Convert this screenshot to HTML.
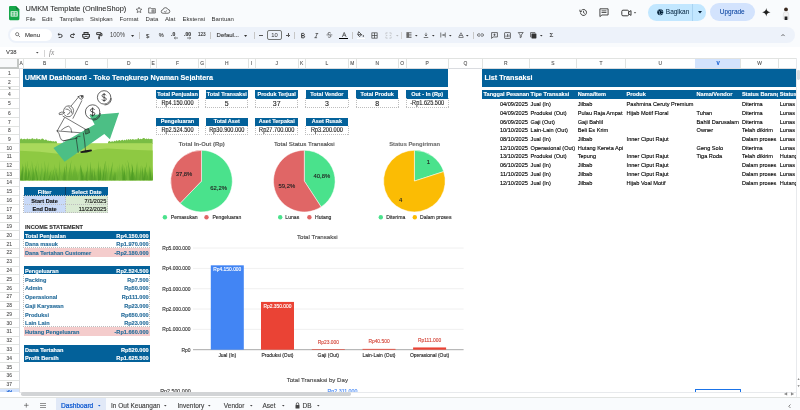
<!DOCTYPE html><html><head><meta charset="utf-8"><style>
html,body{margin:0;padding:0;}
body{width:800px;height:410px;overflow:hidden;position:relative;will-change:transform;font-family:"Liberation Sans", sans-serif;background:#fff;}
div{line-height:1;-webkit-text-stroke:0.12px currentColor;}
svg{overflow:visible;}
</style></head><body>
<div style="position:absolute;left:0.00px;top:0.00px;width:800.00px;height:47.00px;background:#f9fbfd;"></div>
<div style="position:absolute;left:0.00px;top:47.00px;width:800.00px;height:11.30px;background:#fff;"></div>
<svg style="position:absolute;left:9px;top:6.4px" width="10.4" height="14.2" viewBox="0 0 10.4 14.2"><path d="M0 1.1Q0 0 1.1 0H6.9L10.4 3.5V13.1Q10.4 14.2 9.3 14.2H1.1Q0 14.2 0 13.1Z" fill="#16a74a"/><path d="M6.9 0V2.5Q6.9 3.5 7.9 3.5H10.4Z" fill="#0e7f37"/><rect x="2.1" y="5.8" width="6.1" height="4.3" fill="none" stroke="#fff" stroke-width="0.9"/><line x1="2.1" y1="7.95" x2="8.2" y2="7.95" stroke="#fff" stroke-width="0.8"/><line x1="5.15" y1="5.8" x2="5.15" y2="10.1" stroke="#fff" stroke-width="0.8"/></svg>
<div style="position:absolute;left:25.6px;top:5.2px;font-size:7.45px;color:#1f1f1f;white-space:nowrap;-webkit-text-stroke:0.05px">UMKM Template (OnlineShop)</div>
<svg style="position:absolute;left:134.5px;top:6px" width="8" height="8" viewBox="0 0 24 24"><path d="M12 3.5l2.6 5.6 6.1.6-4.6 4.1 1.3 6-5.4-3.1-5.4 3.1 1.3-6-4.6-4.1 6.1-.6z" fill="none" stroke="#444" stroke-width="2"/></svg>
<svg style="position:absolute;left:147.5px;top:6.5px" width="8" height="7" viewBox="0 0 24 21"><path d="M2 3h7l2 2h11v13H2z" fill="none" stroke="#444" stroke-width="2.2"/><rect x="12" y="9" width="6" height="6" fill="none" stroke="#444" stroke-width="2"/></svg>
<svg style="position:absolute;left:160.5px;top:6.5px" width="9" height="7" viewBox="0 0 26 20"><path d="M6 18a5 5 0 0 1-.5-10A7.5 7.5 0 0 1 20 7a5.5 5.5 0 0 1 0 11z" fill="none" stroke="#444" stroke-width="2.2"/><path d="M9 12l3 3 5-5" fill="none" stroke="#444" stroke-width="2"/></svg>
<div style="position:absolute;left:26px;top:15.6px;font-size:6px;color:#333;white-space:nowrap;-webkit-text-stroke:0">File</div>
<div style="position:absolute;left:42px;top:15.6px;font-size:6px;color:#333;white-space:nowrap;-webkit-text-stroke:0">Edit</div>
<div style="position:absolute;left:59.5px;top:15.6px;font-size:6px;color:#333;white-space:nowrap;-webkit-text-stroke:0">Tampilan</div>
<div style="position:absolute;left:90px;top:15.6px;font-size:6px;color:#333;white-space:nowrap;-webkit-text-stroke:0">Sisipkan</div>
<div style="position:absolute;left:119.5px;top:15.6px;font-size:6px;color:#333;white-space:nowrap;-webkit-text-stroke:0">Format</div>
<div style="position:absolute;left:145.6px;top:15.6px;font-size:6px;color:#333;white-space:nowrap;-webkit-text-stroke:0">Data</div>
<div style="position:absolute;left:165px;top:15.6px;font-size:6px;color:#333;white-space:nowrap;-webkit-text-stroke:0">Alat</div>
<div style="position:absolute;left:182.4px;top:15.6px;font-size:6px;color:#333;white-space:nowrap;-webkit-text-stroke:0">Ekstensi</div>
<div style="position:absolute;left:211.6px;top:15.6px;font-size:6px;color:#333;white-space:nowrap;-webkit-text-stroke:0">Bantuan</div>
<svg style="position:absolute;left:579px;top:7.5px" width="9" height="9" viewBox="0 0 24 24"><path d="M4 12a8 8 0 1 0 2.3-5.7" fill="none" stroke="#333" stroke-width="2.4"/><path d="M2.5 4.5v5h5" fill="none" stroke="#333" stroke-width="2.4"/><path d="M12 7.5v5l3.5 2" fill="none" stroke="#333" stroke-width="2.2"/></svg>
<svg style="position:absolute;left:599px;top:8px" width="10" height="9" viewBox="0 0 24 22"><path d="M2 2h20v15H7l-5 4z" fill="none" stroke="#333" stroke-width="2.2"/><path d="M6 7h12M6 11h12" stroke="#333" stroke-width="2"/></svg>
<svg style="position:absolute;left:621px;top:8.5px" width="16" height="8" viewBox="0 0 40 20"><rect x="2" y="3" width="17" height="14" rx="3" fill="none" stroke="#333" stroke-width="2.4"/><path d="M19 8l6-4v12l-6-4" fill="none" stroke="#333" stroke-width="2.4"/><path d="M32 8l3 3 3-3z" fill="#333"/></svg>
<div style="position:absolute;left:648px;top:4px;width:58px;height:16.5px;border-radius:8.25px;background:#c2e7ff"></div>
<div style="position:absolute;left:692.40px;top:4.00px;width:0.60px;height:16.50px;background:#a9d3f1;"></div>
<svg style="position:absolute;left:656.5px;top:9px" width="6.5" height="6.5" viewBox="0 0 24 24"><circle cx="12" cy="12" r="11" fill="#001d35"/><path d="M5 6q3 1 4 4t-1 5q2 2 1 6M14 2q-1 4 2 5t5 4M13 22q0-4 3-5t5 0" fill="none" stroke="#c2e7ff" stroke-width="2.2"/></svg>
<div style="position:absolute;left:665.8px;top:8.8px;font-size:6.5px;color:#0a2a45;white-space:nowrap;-webkit-text-stroke:0.05px">Bagikan</div>
<svg style="position:absolute;left:697.5px;top:11px" width="4" height="2.5" viewBox="0 0 8 5"><path d="M0 0h8L4 5z" fill="#001d35"/></svg>
<div style="position:absolute;left:710px;top:3.3px;width:44.6px;height:18.2px;border-radius:9.1px;background:#d3e3fd"></div>
<div style="position:absolute;left:719.8px;top:8.8px;font-size:6.5px;color:#0842a0;white-space:nowrap;-webkit-text-stroke:0.05px">Upgrade</div>
<svg style="position:absolute;left:761.5px;top:8px" width="8.5" height="8.5" viewBox="0 0 24 24"><path d="M12 0Q13 11 24 12Q13 13 12 24Q11 13 0 12Q11 11 12 0z" fill="#1f1f1f"/></svg>
<svg style="position:absolute;left:782px;top:6.5px" width="8" height="13" viewBox="0 0 8 13"><circle cx="4" cy="2.4" r="1.9" fill="#3a2a20"/><path d="M1.3 12V7.2q0-2.6 2.7-2.6t2.7 2.6V12z" fill="#f2f2f2" stroke="#bbb" stroke-width="0.3"/><path d="M2.6 9.5h2.8v3.5H2.6z" fill="#222"/></svg>
<div style="position:absolute;left:8px;top:26.8px;width:786.5px;height:16.2px;border-radius:8.1px;background:#edf2fa"></div>
<div style="position:absolute;left:10px;top:29px;width:42px;height:12px;border-radius:6px;background:#fff"></div>
<svg style="position:absolute;left:15.3px;top:32px" width="5.5" height="5.5" viewBox="0 0 24 24"><circle cx="9.5" cy="9.5" r="7" fill="none" stroke="#444" stroke-width="2.8"/><path d="M15 15l7 7" stroke="#444" stroke-width="3"/></svg>
<div style="position:absolute;left:25px;top:31.8px;font-size:6px;color:#444;white-space:nowrap">Menu</div>
<svg style="position:absolute;left:56.6px;top:33.2px" width="5.6" height="4.9" viewBox="0 0 24 21"><path d="M6 6h9.5a6.5 6.5 0 0 1 0 13H7" fill="none" stroke="#333" stroke-width="4"/><path d="M9.5 1.5L4 6l5.5 4.5" fill="none" stroke="#333" stroke-width="4"/></svg>
<svg style="position:absolute;left:69.6px;top:33.2px" width="5.6" height="4.9" viewBox="0 0 24 21"><path d="M18 6H8.5a6.5 6.5 0 0 0 0 13H17" fill="none" stroke="#333" stroke-width="4"/><path d="M14.5 1.5L20 6l-5.5 4.5" fill="none" stroke="#333" stroke-width="4"/></svg>
<svg style="position:absolute;left:82.1px;top:32px" width="8.1" height="6.8" viewBox="0 0 24 20"><path d="M6 1.5h12v5H6z" fill="none" stroke="#333" stroke-width="3"/><path d="M2 7h20v8h-4v4H6v-4H2z" fill="none" stroke="#333" stroke-width="3"/><path d="M8 13h8" stroke="#333" stroke-width="2.6"/></svg>
<svg style="position:absolute;left:95.6px;top:32px" width="6.5" height="7.4" viewBox="0 0 20 23"><path d="M2 2h13v6H2z" fill="none" stroke="#333" stroke-width="3"/><path d="M15 5h3.5v6.5H9.5v3" fill="none" stroke="#333" stroke-width="3"/><path d="M7 14h5v6.5a2.5 2.5 0 0 1-5 0z" fill="#333"/></svg>
<div style="position:absolute;left:110px;top:33.2px;font-size:5.9px;color:#444;white-space:nowrap;transform:scaleY(1.12);-webkit-text-stroke:0">100%</div>
<svg style="position:absolute;left:130.5px;top:34.6px" width="3.2" height="1.9" viewBox="0 0 8 5"><path d="M0 0h8L4 5z" fill="#333"/></svg>
<div style="position:absolute;left:139.30px;top:31.50px;width:0.60px;height:7.00px;background:#c7c7c7;"></div>
<div style="position:absolute;left:146px;top:32.9px;font-size:6px;color:#444;white-space:nowrap;-webkit-text-stroke:0.1px">$</div>
<div style="position:absolute;left:158.8px;top:33.2px;font-size:5.6px;color:#444;white-space:nowrap">%</div>
<div style="position:absolute;left:171px;top:32.4px;font-size:5px;color:#333;white-space:nowrap;font-weight:bold">.0</div>
<svg style="position:absolute;left:173.8px;top:37.3px" width="4" height="2" viewBox="0 0 8 4"><path d="M8 2H1M3 0L0.5 2 3 4" fill="none" stroke="#333" stroke-width="1.2"/></svg>
<div style="position:absolute;left:184px;top:32.4px;font-size:5px;color:#333;white-space:nowrap;font-weight:bold">.00</div>
<svg style="position:absolute;left:187.3px;top:37.3px" width="4" height="2" viewBox="0 0 8 4"><path d="M0 2H7M5 0L7.5 2 5 4" fill="none" stroke="#333" stroke-width="1.2"/></svg>
<div style="position:absolute;left:198px;top:33.4px;font-size:4.6px;color:#333;white-space:nowrap">123</div>
<div style="position:absolute;left:209.70px;top:31.50px;width:0.60px;height:7.00px;background:#c7c7c7;"></div>
<div style="position:absolute;left:216.6px;top:32.4px;font-size:6px;color:#333;white-space:nowrap">Defaul...</div>
<svg style="position:absolute;left:244.3px;top:34.6px" width="3.2" height="1.9" viewBox="0 0 8 5"><path d="M0 0h8L4 5z" fill="#333"/></svg>
<div style="position:absolute;left:254.10px;top:31.50px;width:0.60px;height:7.00px;background:#c7c7c7;"></div>
<div style="position:absolute;left:259.30px;top:35.00px;width:3.30px;height:0.50px;background:#555;"></div>
<div style="position:absolute;left:267.4px;top:30.2px;width:14.2px;height:10px;box-sizing:border-box;border:0.8px solid #747775;border-radius:2px;font-size:5.8px;color:#333;display:flex;align-items:center;justify-content:center;padding-top:1px;box-sizing:border-box;-webkit-text-stroke:0">10</div>
<div style="position:absolute;left:286.00px;top:35.00px;width:3.60px;height:0.50px;background:#555;"></div>
<div style="position:absolute;left:287.55px;top:33.40px;width:0.50px;height:3.80px;background:#555;"></div>
<div style="position:absolute;left:294.20px;top:31.50px;width:0.60px;height:7.00px;background:#c7c7c7;"></div>
<svg style="position:absolute;left:300.6px;top:32.6px" width="4.4" height="5.2" viewBox="0 0 11 13"><path d="M1.5 1h5a3 3 0 0 1 0 5.5h-5zM1.5 6.5h5.8a3 3 0 0 1 0 5.5H1.5z" fill="none" stroke="#333" stroke-width="2.2"/></svg>
<svg style="position:absolute;left:313.8px;top:32.6px" width="4.6" height="5.2" viewBox="0 0 12 13"><path d="M4 1h7M1 12h7M8.5 1L4 12" fill="none" stroke="#333" stroke-width="1.8"/></svg>
<svg style="position:absolute;left:326.2px;top:32.2px" width="6.8" height="5.8" viewBox="0 0 17 15"><path d="M12 3Q10.5 1.2 8.2 1.2Q5 1.2 5 4Q5 5.6 7.5 6.4M9.5 8.5Q12 9.5 12 11.2Q12 13.8 8.6 13.8Q6 13.8 4.6 11.8" fill="none" stroke="#333" stroke-width="1.7"/><path d="M1 7.5h15" stroke="#333" stroke-width="1.5"/></svg>
<svg style="position:absolute;left:340.8px;top:32px" width="6.4" height="5.2" viewBox="0 0 14 12"><path d="M2.5 11.5L7 1l4.5 10.5M4.3 7.5h5.4" fill="none" stroke="#333" stroke-width="1.6"/></svg>
<div style="position:absolute;left:339.00px;top:38.00px;width:9.00px;height:1.40px;background:#000;"></div>
<div style="position:absolute;left:351.70px;top:31.50px;width:0.60px;height:7.00px;background:#c7c7c7;"></div>
<svg style="position:absolute;left:357px;top:31px" width="8" height="8" viewBox="0 0 24 24"><path d="M5 2l9 9-6 6-6-6z" fill="none" stroke="#333" stroke-width="2.4"/><path d="M3 11h11" stroke="#333" stroke-width="2.4"/><circle cx="19" cy="15" r="2.2" fill="#333"/><rect x="0" y="21" width="24" height="3" fill="#fff"/></svg>
<svg style="position:absolute;left:371px;top:31.8px" width="7" height="7" viewBox="0 0 24 24"><rect x="3" y="3" width="18" height="18" fill="none" stroke="#333" stroke-width="2.3"/><path d="M12 3v18M3 12h18" stroke="#333" stroke-width="2.3"/></svg>
<svg style="position:absolute;left:385px;top:31.8px" width="7" height="7" viewBox="0 0 24 24"><path d="M3 8V3h6M15 3h6v5M21 16v5h-6M9 21H3v-5M3 12h5M16 12h5" fill="none" stroke="#b7b9bb" stroke-width="2.3"/></svg>
<svg style="position:absolute;left:396px;top:34.5px" width="2.6" height="1.6" viewBox="0 0 8 5"><path d="M0 0h8L4 5z" fill="#b7b9bb"/></svg>
<div style="position:absolute;left:401.10px;top:31.50px;width:0.50px;height:7.00px;background:#d0d0d0;"></div>
<svg style="position:absolute;left:406px;top:32.2px" width="6" height="6" viewBox="0 0 24 24"><path d="M2 2.5h20M2 9h20M2 15.5h20M2 22h20" stroke="#5a5a5a" stroke-width="3"/><rect x="2" y="2" width="10" height="20" fill="#6a6a6a"/></svg>
<svg style="position:absolute;left:415.2px;top:34.5px" width="2.6" height="1.6" viewBox="0 0 8 5"><path d="M0 0h8L4 5z" fill="#333"/></svg>
<svg style="position:absolute;left:423px;top:32px" width="6" height="6.5" viewBox="0 0 24 24"><path d="M12 2v13M7 10l5 5 5-5M3 21h18" fill="none" stroke="#333" stroke-width="2.5"/></svg>
<svg style="position:absolute;left:432.2px;top:34.5px" width="2.6" height="1.6" viewBox="0 0 8 5"><path d="M0 0h8L4 5z" fill="#333"/></svg>
<svg style="position:absolute;left:439.6px;top:32px" width="6" height="6" viewBox="0 0 24 24"><path d="M3 2v20M21 2v20M7 12h11M14 8l4 4-4 4" fill="none" stroke="#333" stroke-width="2.5"/></svg>
<svg style="position:absolute;left:448.7px;top:34.5px" width="2.6" height="1.6" viewBox="0 0 8 5"><path d="M0 0h8L4 5z" fill="#333"/></svg>
<svg style="position:absolute;left:457.6px;top:32px" width="6" height="6" viewBox="0 0 24 24"><path d="M3 20L12 3l9 17M6 14h12M2 22h20" fill="none" stroke="#333" stroke-width="2.3"/></svg>
<svg style="position:absolute;left:466.3px;top:34.5px" width="2.6" height="1.6" viewBox="0 0 8 5"><path d="M0 0h8L4 5z" fill="#333"/></svg>
<div style="position:absolute;left:472.70px;top:31.50px;width:0.60px;height:7.00px;background:#c7c7c7;"></div>
<svg style="position:absolute;left:477px;top:33px" width="7" height="4" viewBox="0 0 28 14"><path d="M11 2H7a5 5 0 0 0 0 10h4M17 2h4a5 5 0 0 1 0 10h-4M9 7h10" fill="none" stroke="#333" stroke-width="2.6"/></svg>
<svg style="position:absolute;left:491px;top:31.8px" width="7" height="7" viewBox="0 0 24 24"><path d="M2 2h20v15H7l-5 5z" fill="none" stroke="#333" stroke-width="2.4"/><path d="M12 5.5v8M8 9.5h8" stroke="#333" stroke-width="2.2"/></svg>
<svg style="position:absolute;left:504px;top:31.8px" width="7" height="7" viewBox="0 0 24 24"><rect x="2" y="2" width="20" height="20" rx="2" fill="none" stroke="#333" stroke-width="2.4"/><path d="M7 17v-5M12 17V7M17 17v-8" stroke="#333" stroke-width="2.4"/></svg>
<svg style="position:absolute;left:518px;top:32px" width="5.5" height="6" viewBox="0 0 20 22"><path d="M1 2h18l-7 9v8l-4 2V11z" fill="none" stroke="#333" stroke-width="2.4"/></svg>
<svg style="position:absolute;left:530px;top:31.8px" width="7" height="7" viewBox="0 0 24 24"><rect x="5" y="5" width="17" height="17" rx="2" fill="#333"/><path d="M2 18V2h16" fill="none" stroke="#333" stroke-width="2.4"/></svg>
<svg style="position:absolute;left:540.2px;top:34.5px" width="2.6" height="1.6" viewBox="0 0 8 5"><path d="M0 0h8L4 5z" fill="#333"/></svg>
<div style="position:absolute;left:549.6px;top:32.4px;font-size:6.2px;color:#333">&#931;</div>
<svg style="position:absolute;left:780.5px;top:34px" width="4" height="2.5" viewBox="0 0 10 6"><path d="M1 5l4-4 4 4" fill="none" stroke="#333" stroke-width="1.8"/></svg>
<div style="position:absolute;left:6px;top:50.2px;font-size:5.9px;color:#333;white-space:nowrap;-webkit-text-stroke:0.05px">V38</div>
<svg style="position:absolute;left:36.2px;top:51.9px" width="2.6" height="1.6" viewBox="0 0 8 5"><path d="M0 0h8L4 5z" fill="#444"/></svg>
<div style="position:absolute;left:44.20px;top:49.50px;width:0.50px;height:7.00px;background:#d5d5d5;"></div>
<div style="position:absolute;left:49px;top:49.2px;font-size:7.4px;color:#888;font-style:italic;font-family:'Liberation Serif';-webkit-text-stroke:0">fx</div>
<div style="position:absolute;left:0.00px;top:58.30px;width:800.00px;height:10.30px;background:#fff;"></div>
<div style="position:absolute;left:0.00px;top:58.00px;width:800.00px;height:0.60px;background:#e1e3e1;"></div>
<div style="position:absolute;left:19.00px;top:68.10px;width:777.00px;height:0.60px;background:#dadce0;"></div>
<div style="position:absolute;left:0.00px;top:58.60px;width:17.40px;height:9.00px;background:#f8f9fa;"></div>
<div style="position:absolute;left:17.30px;top:58.60px;width:1.60px;height:10.10px;background:#c4c7c5;"></div>
<div style="position:absolute;left:0.00px;top:67.30px;width:18.90px;height:1.40px;background:#c4c7c5;"></div>
<div style="position:absolute;left:23.20px;top:58.60px;width:0.60px;height:9.50px;background:#e1e3e1;"></div>
<div style="position:absolute;left:19.00px;top:59.6px;width:4.50px;height:9.5px;display:flex;align-items:center;justify-content:center;font-size:4.9px;color:#575757;font-weight:normal;overflow:hidden">A</div>
<div style="position:absolute;left:65.30px;top:58.60px;width:0.60px;height:9.50px;background:#e1e3e1;"></div>
<div style="position:absolute;left:23.50px;top:59.6px;width:42.10px;height:9.5px;display:flex;align-items:center;justify-content:center;font-size:4.9px;color:#575757;font-weight:normal;overflow:hidden">B</div>
<div style="position:absolute;left:107.30px;top:58.60px;width:0.60px;height:9.50px;background:#e1e3e1;"></div>
<div style="position:absolute;left:65.60px;top:59.6px;width:42.00px;height:9.5px;display:flex;align-items:center;justify-content:center;font-size:4.9px;color:#575757;font-weight:normal;overflow:hidden">C</div>
<div style="position:absolute;left:149.70px;top:58.60px;width:0.60px;height:9.50px;background:#e1e3e1;"></div>
<div style="position:absolute;left:107.60px;top:59.6px;width:42.40px;height:9.5px;display:flex;align-items:center;justify-content:center;font-size:4.9px;color:#575757;font-weight:normal;overflow:hidden">D</div>
<div style="position:absolute;left:156.10px;top:58.60px;width:0.60px;height:9.50px;background:#e1e3e1;"></div>
<div style="position:absolute;left:150.00px;top:59.6px;width:6.40px;height:9.5px;display:flex;align-items:center;justify-content:center;font-size:4.9px;color:#575757;font-weight:normal;overflow:hidden">E</div>
<div style="position:absolute;left:198.30px;top:58.60px;width:0.60px;height:9.50px;background:#e1e3e1;"></div>
<div style="position:absolute;left:156.40px;top:59.6px;width:42.20px;height:9.5px;display:flex;align-items:center;justify-content:center;font-size:4.9px;color:#575757;font-weight:normal;overflow:hidden">F</div>
<div style="position:absolute;left:205.30px;top:58.60px;width:0.60px;height:9.50px;background:#e1e3e1;"></div>
<div style="position:absolute;left:198.60px;top:59.6px;width:7.00px;height:9.5px;display:flex;align-items:center;justify-content:center;font-size:4.9px;color:#575757;font-weight:normal;overflow:hidden">G</div>
<div style="position:absolute;left:247.70px;top:58.60px;width:0.60px;height:9.50px;background:#e1e3e1;"></div>
<div style="position:absolute;left:205.60px;top:59.6px;width:42.40px;height:9.5px;display:flex;align-items:center;justify-content:center;font-size:4.9px;color:#575757;font-weight:normal;overflow:hidden">H</div>
<div style="position:absolute;left:255.10px;top:58.60px;width:0.60px;height:9.50px;background:#e1e3e1;"></div>
<div style="position:absolute;left:248.00px;top:59.6px;width:7.40px;height:9.5px;display:flex;align-items:center;justify-content:center;font-size:4.9px;color:#575757;font-weight:normal;overflow:hidden">I</div>
<div style="position:absolute;left:297.70px;top:58.60px;width:0.60px;height:9.50px;background:#e1e3e1;"></div>
<div style="position:absolute;left:255.40px;top:59.6px;width:42.60px;height:9.5px;display:flex;align-items:center;justify-content:center;font-size:4.9px;color:#575757;font-weight:normal;overflow:hidden">J</div>
<div style="position:absolute;left:305.20px;top:58.60px;width:0.60px;height:9.50px;background:#e1e3e1;"></div>
<div style="position:absolute;left:298.00px;top:59.6px;width:7.50px;height:9.5px;display:flex;align-items:center;justify-content:center;font-size:4.9px;color:#575757;font-weight:normal;overflow:hidden">K</div>
<div style="position:absolute;left:348.10px;top:58.60px;width:0.60px;height:9.50px;background:#e1e3e1;"></div>
<div style="position:absolute;left:305.50px;top:59.6px;width:42.90px;height:9.5px;display:flex;align-items:center;justify-content:center;font-size:4.9px;color:#575757;font-weight:normal;overflow:hidden">L</div>
<div style="position:absolute;left:355.70px;top:58.60px;width:0.60px;height:9.50px;background:#e1e3e1;"></div>
<div style="position:absolute;left:348.40px;top:59.6px;width:7.60px;height:9.5px;display:flex;align-items:center;justify-content:center;font-size:4.9px;color:#575757;font-weight:normal;overflow:hidden">M</div>
<div style="position:absolute;left:398.10px;top:58.60px;width:0.60px;height:9.50px;background:#e1e3e1;"></div>
<div style="position:absolute;left:356.00px;top:59.6px;width:42.40px;height:9.5px;display:flex;align-items:center;justify-content:center;font-size:4.9px;color:#575757;font-weight:normal;overflow:hidden">N</div>
<div style="position:absolute;left:405.70px;top:58.60px;width:0.60px;height:9.50px;background:#e1e3e1;"></div>
<div style="position:absolute;left:398.40px;top:59.6px;width:7.60px;height:9.5px;display:flex;align-items:center;justify-content:center;font-size:4.9px;color:#575757;font-weight:normal;overflow:hidden">O</div>
<div style="position:absolute;left:448.10px;top:58.60px;width:0.60px;height:9.50px;background:#e1e3e1;"></div>
<div style="position:absolute;left:406.00px;top:59.6px;width:42.40px;height:9.5px;display:flex;align-items:center;justify-content:center;font-size:4.9px;color:#575757;font-weight:normal;overflow:hidden">P</div>
<div style="position:absolute;left:482.10px;top:58.60px;width:0.60px;height:9.50px;background:#e1e3e1;"></div>
<div style="position:absolute;left:448.40px;top:59.6px;width:34.00px;height:9.5px;display:flex;align-items:center;justify-content:center;font-size:4.9px;color:#575757;font-weight:normal;overflow:hidden">Q</div>
<div style="position:absolute;left:529.10px;top:58.60px;width:0.60px;height:9.50px;background:#e1e3e1;"></div>
<div style="position:absolute;left:482.40px;top:59.6px;width:47.00px;height:9.5px;display:flex;align-items:center;justify-content:center;font-size:4.9px;color:#575757;font-weight:normal;overflow:hidden">R</div>
<div style="position:absolute;left:576.20px;top:58.60px;width:0.60px;height:9.50px;background:#e1e3e1;"></div>
<div style="position:absolute;left:529.40px;top:59.6px;width:47.10px;height:9.5px;display:flex;align-items:center;justify-content:center;font-size:4.9px;color:#575757;font-weight:normal;overflow:hidden">S</div>
<div style="position:absolute;left:625.10px;top:58.60px;width:0.60px;height:9.50px;background:#e1e3e1;"></div>
<div style="position:absolute;left:576.50px;top:59.6px;width:48.90px;height:9.5px;display:flex;align-items:center;justify-content:center;font-size:4.9px;color:#575757;font-weight:normal;overflow:hidden">T</div>
<div style="position:absolute;left:695.10px;top:58.60px;width:0.60px;height:9.50px;background:#e1e3e1;"></div>
<div style="position:absolute;left:625.40px;top:59.6px;width:70.00px;height:9.5px;display:flex;align-items:center;justify-content:center;font-size:4.9px;color:#575757;font-weight:normal;overflow:hidden">U</div>
<div style="position:absolute;left:695.40px;top:58.60px;width:45.30px;height:9.50px;background:#d3e3fd;"></div>
<div style="position:absolute;left:740.40px;top:58.60px;width:0.60px;height:9.50px;background:#e1e3e1;"></div>
<div style="position:absolute;left:695.40px;top:59.6px;width:45.30px;height:9.5px;display:flex;align-items:center;justify-content:center;font-size:4.9px;color:#0b57d0;font-weight:bold;overflow:hidden">V</div>
<div style="position:absolute;left:778.20px;top:58.60px;width:0.60px;height:9.50px;background:#e1e3e1;"></div>
<div style="position:absolute;left:740.70px;top:59.6px;width:37.80px;height:9.5px;display:flex;align-items:center;justify-content:center;font-size:4.9px;color:#575757;font-weight:normal;overflow:hidden">W</div>
<div style="position:absolute;left:795.70px;top:58.60px;width:0.60px;height:9.50px;background:#e1e3e1;"></div>
<div style="position:absolute;left:0.00px;top:68.70px;width:18.90px;height:323.30px;background:#fff;"></div>
<div style="position:absolute;left:18.60px;top:68.70px;width:0.50px;height:323.30px;background:#dadce0;"></div>
<div style="position:absolute;left:0.00px;top:77.20px;width:18.60px;height:0.60px;background:#e1e3e1;"></div>
<div style="position:absolute;left:0;top:70.10px;width:18.6px;height:8.80px;display:flex;align-items:center;justify-content:center;font-size:4.9px;color:#575757;overflow:hidden">1</div>
<div style="position:absolute;left:0.00px;top:86.00px;width:18.60px;height:0.60px;background:#e1e3e1;"></div>
<div style="position:absolute;left:0;top:78.90px;width:18.6px;height:8.80px;display:flex;align-items:center;justify-content:center;font-size:4.9px;color:#575757;overflow:hidden">2</div>
<div style="position:absolute;left:0.00px;top:89.20px;width:18.60px;height:0.60px;background:#e1e3e1;"></div>
<div style="position:absolute;left:0;top:86.30px;width:18.6px;height:2.60px;overflow:hidden;font-size:4.9px;color:#575757;text-align:center;line-height:4.9px"><span style="position:relative;top:1.6px">3</span></div>
<div style="position:absolute;left:0.00px;top:98.20px;width:18.60px;height:0.60px;background:#e1e3e1;"></div>
<div style="position:absolute;left:0;top:90.90px;width:18.6px;height:9.00px;display:flex;align-items:center;justify-content:center;font-size:4.9px;color:#575757;overflow:hidden">4</div>
<div style="position:absolute;left:0.00px;top:107.70px;width:18.60px;height:0.60px;background:#e1e3e1;"></div>
<div style="position:absolute;left:0;top:99.90px;width:18.6px;height:9.50px;display:flex;align-items:center;justify-content:center;font-size:4.9px;color:#575757;overflow:hidden">5</div>
<div style="position:absolute;left:0.00px;top:117.20px;width:18.60px;height:0.60px;background:#e1e3e1;"></div>
<div style="position:absolute;left:0;top:109.40px;width:18.6px;height:9.50px;display:flex;align-items:center;justify-content:center;font-size:4.9px;color:#575757;overflow:hidden">6</div>
<div style="position:absolute;left:0.00px;top:125.70px;width:18.60px;height:0.60px;background:#e1e3e1;"></div>
<div style="position:absolute;left:0;top:118.90px;width:18.6px;height:8.50px;display:flex;align-items:center;justify-content:center;font-size:4.9px;color:#575757;overflow:hidden">7</div>
<div style="position:absolute;left:0.00px;top:134.20px;width:18.60px;height:0.60px;background:#e1e3e1;"></div>
<div style="position:absolute;left:0;top:127.40px;width:18.6px;height:8.50px;display:flex;align-items:center;justify-content:center;font-size:4.9px;color:#575757;overflow:hidden">8</div>
<div style="position:absolute;left:0.00px;top:143.20px;width:18.60px;height:0.60px;background:#e1e3e1;"></div>
<div style="position:absolute;left:0;top:135.90px;width:18.6px;height:9.00px;display:flex;align-items:center;justify-content:center;font-size:4.9px;color:#575757;overflow:hidden">9</div>
<div style="position:absolute;left:0.00px;top:151.70px;width:18.60px;height:0.60px;background:#e1e3e1;"></div>
<div style="position:absolute;left:0;top:144.90px;width:18.6px;height:8.50px;display:flex;align-items:center;justify-content:center;font-size:4.9px;color:#575757;overflow:hidden">10</div>
<div style="position:absolute;left:0.00px;top:160.50px;width:18.60px;height:0.60px;background:#e1e3e1;"></div>
<div style="position:absolute;left:0;top:153.40px;width:18.6px;height:8.80px;display:flex;align-items:center;justify-content:center;font-size:4.9px;color:#575757;overflow:hidden">11</div>
<div style="position:absolute;left:0.00px;top:169.20px;width:18.60px;height:0.60px;background:#e1e3e1;"></div>
<div style="position:absolute;left:0;top:162.20px;width:18.6px;height:8.70px;display:flex;align-items:center;justify-content:center;font-size:4.9px;color:#575757;overflow:hidden">12</div>
<div style="position:absolute;left:0.00px;top:177.70px;width:18.60px;height:0.60px;background:#e1e3e1;"></div>
<div style="position:absolute;left:0;top:170.90px;width:18.6px;height:8.50px;display:flex;align-items:center;justify-content:center;font-size:4.9px;color:#575757;overflow:hidden">13</div>
<div style="position:absolute;left:0.00px;top:186.20px;width:18.60px;height:0.60px;background:#e1e3e1;"></div>
<div style="position:absolute;left:0;top:179.40px;width:18.6px;height:8.50px;display:flex;align-items:center;justify-content:center;font-size:4.9px;color:#575757;overflow:hidden">14</div>
<div style="position:absolute;left:0.00px;top:195.20px;width:18.60px;height:0.60px;background:#e1e3e1;"></div>
<div style="position:absolute;left:0;top:187.90px;width:18.6px;height:9.00px;display:flex;align-items:center;justify-content:center;font-size:4.9px;color:#575757;overflow:hidden">15</div>
<div style="position:absolute;left:0.00px;top:204.20px;width:18.60px;height:0.60px;background:#e1e3e1;"></div>
<div style="position:absolute;left:0;top:196.90px;width:18.6px;height:9.00px;display:flex;align-items:center;justify-content:center;font-size:4.9px;color:#575757;overflow:hidden">16</div>
<div style="position:absolute;left:0.00px;top:212.70px;width:18.60px;height:0.60px;background:#e1e3e1;"></div>
<div style="position:absolute;left:0;top:205.90px;width:18.6px;height:8.50px;display:flex;align-items:center;justify-content:center;font-size:4.9px;color:#575757;overflow:hidden">17</div>
<div style="position:absolute;left:0.00px;top:221.70px;width:18.60px;height:0.60px;background:#e1e3e1;"></div>
<div style="position:absolute;left:0;top:214.40px;width:18.6px;height:9.00px;display:flex;align-items:center;justify-content:center;font-size:4.9px;color:#575757;overflow:hidden">18</div>
<div style="position:absolute;left:0.00px;top:230.20px;width:18.60px;height:0.60px;background:#e1e3e1;"></div>
<div style="position:absolute;left:0;top:223.40px;width:18.6px;height:8.50px;display:flex;align-items:center;justify-content:center;font-size:4.9px;color:#575757;overflow:hidden">19</div>
<div style="position:absolute;left:0.00px;top:239.00px;width:18.60px;height:0.60px;background:#e1e3e1;"></div>
<div style="position:absolute;left:0;top:231.90px;width:18.6px;height:8.80px;display:flex;align-items:center;justify-content:center;font-size:4.9px;color:#575757;overflow:hidden">20</div>
<div style="position:absolute;left:0.00px;top:247.70px;width:18.60px;height:0.60px;background:#e1e3e1;"></div>
<div style="position:absolute;left:0;top:240.70px;width:18.6px;height:8.70px;display:flex;align-items:center;justify-content:center;font-size:4.9px;color:#575757;overflow:hidden">21</div>
<div style="position:absolute;left:0.00px;top:256.70px;width:18.60px;height:0.60px;background:#e1e3e1;"></div>
<div style="position:absolute;left:0;top:249.40px;width:18.6px;height:9.00px;display:flex;align-items:center;justify-content:center;font-size:4.9px;color:#575757;overflow:hidden">22</div>
<div style="position:absolute;left:0.00px;top:265.50px;width:18.60px;height:0.60px;background:#e1e3e1;"></div>
<div style="position:absolute;left:0;top:258.40px;width:18.6px;height:8.80px;display:flex;align-items:center;justify-content:center;font-size:4.9px;color:#575757;overflow:hidden">23</div>
<div style="position:absolute;left:0.00px;top:274.20px;width:18.60px;height:0.60px;background:#e1e3e1;"></div>
<div style="position:absolute;left:0;top:267.20px;width:18.6px;height:8.70px;display:flex;align-items:center;justify-content:center;font-size:4.9px;color:#575757;overflow:hidden">24</div>
<div style="position:absolute;left:0.00px;top:283.00px;width:18.60px;height:0.60px;background:#e1e3e1;"></div>
<div style="position:absolute;left:0;top:275.90px;width:18.6px;height:8.80px;display:flex;align-items:center;justify-content:center;font-size:4.9px;color:#575757;overflow:hidden">25</div>
<div style="position:absolute;left:0.00px;top:291.70px;width:18.60px;height:0.60px;background:#e1e3e1;"></div>
<div style="position:absolute;left:0;top:284.70px;width:18.6px;height:8.70px;display:flex;align-items:center;justify-content:center;font-size:4.9px;color:#575757;overflow:hidden">26</div>
<div style="position:absolute;left:0.00px;top:300.50px;width:18.60px;height:0.60px;background:#e1e3e1;"></div>
<div style="position:absolute;left:0;top:293.40px;width:18.6px;height:8.80px;display:flex;align-items:center;justify-content:center;font-size:4.9px;color:#575757;overflow:hidden">27</div>
<div style="position:absolute;left:0.00px;top:309.20px;width:18.60px;height:0.60px;background:#e1e3e1;"></div>
<div style="position:absolute;left:0;top:302.20px;width:18.6px;height:8.70px;display:flex;align-items:center;justify-content:center;font-size:4.9px;color:#575757;overflow:hidden">28</div>
<div style="position:absolute;left:0.00px;top:318.00px;width:18.60px;height:0.60px;background:#e1e3e1;"></div>
<div style="position:absolute;left:0;top:310.90px;width:18.6px;height:8.80px;display:flex;align-items:center;justify-content:center;font-size:4.9px;color:#575757;overflow:hidden">29</div>
<div style="position:absolute;left:0.00px;top:326.70px;width:18.60px;height:0.60px;background:#e1e3e1;"></div>
<div style="position:absolute;left:0;top:319.70px;width:18.6px;height:8.70px;display:flex;align-items:center;justify-content:center;font-size:4.9px;color:#575757;overflow:hidden">30</div>
<div style="position:absolute;left:0.00px;top:335.50px;width:18.60px;height:0.60px;background:#e1e3e1;"></div>
<div style="position:absolute;left:0;top:328.40px;width:18.6px;height:8.80px;display:flex;align-items:center;justify-content:center;font-size:4.9px;color:#575757;overflow:hidden">31</div>
<div style="position:absolute;left:0.00px;top:344.20px;width:18.60px;height:0.60px;background:#e1e3e1;"></div>
<div style="position:absolute;left:0;top:337.20px;width:18.6px;height:8.70px;display:flex;align-items:center;justify-content:center;font-size:4.9px;color:#575757;overflow:hidden">32</div>
<div style="position:absolute;left:0.00px;top:353.00px;width:18.60px;height:0.60px;background:#e1e3e1;"></div>
<div style="position:absolute;left:0;top:345.90px;width:18.6px;height:8.80px;display:flex;align-items:center;justify-content:center;font-size:4.9px;color:#575757;overflow:hidden">33</div>
<div style="position:absolute;left:0.00px;top:361.90px;width:18.60px;height:0.60px;background:#e1e3e1;"></div>
<div style="position:absolute;left:0;top:354.70px;width:18.6px;height:8.90px;display:flex;align-items:center;justify-content:center;font-size:4.9px;color:#575757;overflow:hidden">34</div>
<div style="position:absolute;left:0.00px;top:370.70px;width:18.60px;height:0.60px;background:#e1e3e1;"></div>
<div style="position:absolute;left:0;top:363.60px;width:18.6px;height:8.80px;display:flex;align-items:center;justify-content:center;font-size:4.9px;color:#575757;overflow:hidden">35</div>
<div style="position:absolute;left:0.00px;top:379.50px;width:18.60px;height:0.60px;background:#e1e3e1;"></div>
<div style="position:absolute;left:0;top:372.40px;width:18.6px;height:8.80px;display:flex;align-items:center;justify-content:center;font-size:4.9px;color:#575757;overflow:hidden">36</div>
<div style="position:absolute;left:0.00px;top:388.20px;width:18.60px;height:0.60px;background:#e1e3e1;"></div>
<div style="position:absolute;left:0;top:381.20px;width:18.6px;height:8.70px;display:flex;align-items:center;justify-content:center;font-size:4.9px;color:#575757;overflow:hidden">37</div>
<div style="position:absolute;left:0.00px;top:388.50px;width:18.60px;height:3.50px;background:#d3e3fd;"></div>
<div style="position:absolute;left:0.00px;top:397.00px;width:18.60px;height:0.60px;background:#e1e3e1;"></div>
<div style="position:absolute;left:0;top:389.90px;width:18.6px;height:3.50px;display:flex;align-items:center;justify-content:center;font-size:4.9px;color:#0b57d0;overflow:hidden">38</div>
<div style="position:absolute;left:23.30px;top:68.90px;width:425.10px;height:17.70px;background:#03619a;"></div>
<div style="position:absolute;left:23.30px;top:74.00px;width:425.10px;height:7.23px;text-align:left;padding:0 1.5px;box-sizing:border-box;overflow:hidden;white-space:nowrap;font-size:7.23px;font-weight:bold;color:#fff;transform:scaleY(1.1);transform-origin:0 84.65%;">UMKM Dashboard - Toko Tengkurep Nyaman Sejahtera</div>
<div style="position:absolute;left:482.40px;top:68.90px;width:313.60px;height:17.70px;background:#03619a;"></div>
<div style="position:absolute;left:482.40px;top:74.00px;width:313.60px;height:7.23px;text-align:left;padding:0 2px;box-sizing:border-box;overflow:hidden;white-space:nowrap;font-size:7.23px;font-weight:bold;color:#fff;transform:scaleY(1.1);transform-origin:0 84.65%;">List Transaksi</div>
<div style="position:absolute;left:156.40px;top:89.50px;width:42.20px;height:9.00px;background:#03619a;"></div>
<div style="position:absolute;left:156.40px;top:92.00px;width:42.20px;height:5.55px;text-align:center;padding:0 0px;box-sizing:border-box;overflow:hidden;white-space:nowrap;font-size:5.55px;font-weight:bold;color:#fff;transform:scaleY(1.1);transform-origin:0 84.65%;">Total Penjualan</div>
<div style="position:absolute;left:156.40px;top:101.00px;width:42.20px;height:5.6px;text-align:center;padding:0 0px;box-sizing:border-box;overflow:hidden;white-space:nowrap;font-size:5.6px;font-weight:normal;color:#222;transform:scaleY(1.18);transform-origin:0 84.65%;">Rp4.150.000</div>
<div style="position:absolute;left:156.00px;top:107.00px;width:43.00px;height:1.00px;background:repeating-linear-gradient(90deg,#bdbdbd 0 1px,transparent 1px 2px);"></div>
<div style="position:absolute;left:156.00px;top:98.00px;width:1.00px;height:10.00px;background:repeating-linear-gradient(180deg,#bdbdbd 0 1px,transparent 1px 2px);"></div>
<div style="position:absolute;left:198.00px;top:98.00px;width:1.00px;height:10.00px;background:repeating-linear-gradient(180deg,#bdbdbd 0 1px,transparent 1px 2px);"></div>
<div style="position:absolute;left:205.60px;top:89.50px;width:42.40px;height:9.00px;background:#03619a;"></div>
<div style="position:absolute;left:205.60px;top:92.00px;width:42.40px;height:5.55px;text-align:center;padding:0 0px;box-sizing:border-box;overflow:hidden;white-space:nowrap;font-size:5.55px;font-weight:bold;color:#fff;transform:scaleY(1.1);transform-origin:0 84.65%;">Total Transaksi</div>
<div style="position:absolute;left:205.60px;top:100.00px;width:42.40px;height:7.0px;text-align:center;padding:0 0px;box-sizing:border-box;overflow:hidden;white-space:nowrap;font-size:7.0px;font-weight:normal;color:#222;transform:scaleY(1.08);transform-origin:0 84.65%;">5</div>
<div style="position:absolute;left:205.00px;top:107.00px;width:43.00px;height:1.00px;background:repeating-linear-gradient(90deg,#bdbdbd 0 1px,transparent 1px 2px);"></div>
<div style="position:absolute;left:205.00px;top:98.00px;width:1.00px;height:10.00px;background:repeating-linear-gradient(180deg,#bdbdbd 0 1px,transparent 1px 2px);"></div>
<div style="position:absolute;left:247.00px;top:98.00px;width:1.00px;height:10.00px;background:repeating-linear-gradient(180deg,#bdbdbd 0 1px,transparent 1px 2px);"></div>
<div style="position:absolute;left:255.40px;top:89.50px;width:42.60px;height:9.00px;background:#03619a;"></div>
<div style="position:absolute;left:255.40px;top:92.00px;width:42.60px;height:5.55px;text-align:center;padding:0 0px;box-sizing:border-box;overflow:hidden;white-space:nowrap;font-size:5.55px;font-weight:bold;color:#fff;transform:scaleY(1.1);transform-origin:0 84.65%;">Produk Terjual</div>
<div style="position:absolute;left:255.40px;top:100.00px;width:42.60px;height:7.0px;text-align:center;padding:0 0px;box-sizing:border-box;overflow:hidden;white-space:nowrap;font-size:7.0px;font-weight:normal;color:#222;transform:scaleY(1.08);transform-origin:0 84.65%;">37</div>
<div style="position:absolute;left:255.00px;top:107.00px;width:43.00px;height:1.00px;background:repeating-linear-gradient(90deg,#bdbdbd 0 1px,transparent 1px 2px);"></div>
<div style="position:absolute;left:255.00px;top:98.00px;width:1.00px;height:10.00px;background:repeating-linear-gradient(180deg,#bdbdbd 0 1px,transparent 1px 2px);"></div>
<div style="position:absolute;left:297.00px;top:98.00px;width:1.00px;height:10.00px;background:repeating-linear-gradient(180deg,#bdbdbd 0 1px,transparent 1px 2px);"></div>
<div style="position:absolute;left:305.50px;top:89.50px;width:42.90px;height:9.00px;background:#03619a;"></div>
<div style="position:absolute;left:305.50px;top:92.00px;width:42.90px;height:5.55px;text-align:center;padding:0 0px;box-sizing:border-box;overflow:hidden;white-space:nowrap;font-size:5.55px;font-weight:bold;color:#fff;transform:scaleY(1.1);transform-origin:0 84.65%;">Total Vendor</div>
<div style="position:absolute;left:305.50px;top:100.00px;width:42.90px;height:7.0px;text-align:center;padding:0 0px;box-sizing:border-box;overflow:hidden;white-space:nowrap;font-size:7.0px;font-weight:normal;color:#222;transform:scaleY(1.08);transform-origin:0 84.65%;">3</div>
<div style="position:absolute;left:305.00px;top:107.00px;width:44.00px;height:1.00px;background:repeating-linear-gradient(90deg,#bdbdbd 0 1px,transparent 1px 2px);"></div>
<div style="position:absolute;left:305.00px;top:98.00px;width:1.00px;height:10.00px;background:repeating-linear-gradient(180deg,#bdbdbd 0 1px,transparent 1px 2px);"></div>
<div style="position:absolute;left:348.00px;top:98.00px;width:1.00px;height:10.00px;background:repeating-linear-gradient(180deg,#bdbdbd 0 1px,transparent 1px 2px);"></div>
<div style="position:absolute;left:356.00px;top:89.50px;width:42.40px;height:9.00px;background:#03619a;"></div>
<div style="position:absolute;left:356.00px;top:92.00px;width:42.40px;height:5.55px;text-align:center;padding:0 0px;box-sizing:border-box;overflow:hidden;white-space:nowrap;font-size:5.55px;font-weight:bold;color:#fff;transform:scaleY(1.1);transform-origin:0 84.65%;">Total Produk</div>
<div style="position:absolute;left:356.00px;top:100.00px;width:42.40px;height:7.0px;text-align:center;padding:0 0px;box-sizing:border-box;overflow:hidden;white-space:nowrap;font-size:7.0px;font-weight:normal;color:#222;transform:scaleY(1.08);transform-origin:0 84.65%;">8</div>
<div style="position:absolute;left:356.00px;top:107.00px;width:43.00px;height:1.00px;background:repeating-linear-gradient(90deg,#bdbdbd 0 1px,transparent 1px 2px);"></div>
<div style="position:absolute;left:356.00px;top:98.00px;width:1.00px;height:10.00px;background:repeating-linear-gradient(180deg,#bdbdbd 0 1px,transparent 1px 2px);"></div>
<div style="position:absolute;left:398.00px;top:98.00px;width:1.00px;height:10.00px;background:repeating-linear-gradient(180deg,#bdbdbd 0 1px,transparent 1px 2px);"></div>
<div style="position:absolute;left:406.00px;top:89.50px;width:42.40px;height:9.00px;background:#03619a;"></div>
<div style="position:absolute;left:406.00px;top:92.00px;width:42.40px;height:5.55px;text-align:center;padding:0 0px;box-sizing:border-box;overflow:hidden;white-space:nowrap;font-size:5.55px;font-weight:bold;color:#fff;transform:scaleY(1.1);transform-origin:0 84.65%;">Out - In (Rp)</div>
<div style="position:absolute;left:406.00px;top:101.00px;width:42.40px;height:5.6px;text-align:center;padding:0 0px;box-sizing:border-box;overflow:hidden;white-space:nowrap;font-size:5.6px;font-weight:normal;color:#222;transform:scaleY(1.18);transform-origin:0 84.65%;">-Rp1.625.500</div>
<div style="position:absolute;left:406.00px;top:107.00px;width:43.00px;height:1.00px;background:repeating-linear-gradient(90deg,#bdbdbd 0 1px,transparent 1px 2px);"></div>
<div style="position:absolute;left:406.00px;top:98.00px;width:1.00px;height:10.00px;background:repeating-linear-gradient(180deg,#bdbdbd 0 1px,transparent 1px 2px);"></div>
<div style="position:absolute;left:448.00px;top:98.00px;width:1.00px;height:10.00px;background:repeating-linear-gradient(180deg,#bdbdbd 0 1px,transparent 1px 2px);"></div>
<div style="position:absolute;left:156.40px;top:117.50px;width:42.20px;height:8.50px;background:#03619a;"></div>
<div style="position:absolute;left:156.40px;top:119.00px;width:42.20px;height:5.55px;text-align:center;padding:0 0px;box-sizing:border-box;overflow:hidden;white-space:nowrap;font-size:5.55px;font-weight:bold;color:#fff;transform:scaleY(1.1);transform-origin:0 84.65%;">Pengeluaran</div>
<div style="position:absolute;left:156.40px;top:128.00px;width:42.20px;height:5.6px;text-align:center;padding:0 0px;box-sizing:border-box;overflow:hidden;white-space:nowrap;font-size:5.6px;font-weight:normal;color:#222;transform:scaleY(1.18);transform-origin:0 84.65%;">Rp2.524.500</div>
<div style="position:absolute;left:156.00px;top:134.00px;width:43.00px;height:1.00px;background:repeating-linear-gradient(90deg,#bdbdbd 0 1px,transparent 1px 2px);"></div>
<div style="position:absolute;left:156.00px;top:126.00px;width:1.00px;height:9.00px;background:repeating-linear-gradient(180deg,#bdbdbd 0 1px,transparent 1px 2px);"></div>
<div style="position:absolute;left:198.00px;top:126.00px;width:1.00px;height:9.00px;background:repeating-linear-gradient(180deg,#bdbdbd 0 1px,transparent 1px 2px);"></div>
<div style="position:absolute;left:205.60px;top:117.50px;width:42.40px;height:8.50px;background:#03619a;"></div>
<div style="position:absolute;left:205.60px;top:119.00px;width:42.40px;height:5.55px;text-align:center;padding:0 0px;box-sizing:border-box;overflow:hidden;white-space:nowrap;font-size:5.55px;font-weight:bold;color:#fff;transform:scaleY(1.1);transform-origin:0 84.65%;">Total Aset</div>
<div style="position:absolute;left:205.60px;top:128.00px;width:42.40px;height:5.6px;text-align:center;padding:0 0px;box-sizing:border-box;overflow:hidden;white-space:nowrap;font-size:5.6px;font-weight:normal;color:#222;transform:scaleY(1.18);transform-origin:0 84.65%;">Rp30.900.000</div>
<div style="position:absolute;left:205.00px;top:134.00px;width:43.00px;height:1.00px;background:repeating-linear-gradient(90deg,#bdbdbd 0 1px,transparent 1px 2px);"></div>
<div style="position:absolute;left:205.00px;top:126.00px;width:1.00px;height:9.00px;background:repeating-linear-gradient(180deg,#bdbdbd 0 1px,transparent 1px 2px);"></div>
<div style="position:absolute;left:247.00px;top:126.00px;width:1.00px;height:9.00px;background:repeating-linear-gradient(180deg,#bdbdbd 0 1px,transparent 1px 2px);"></div>
<div style="position:absolute;left:255.40px;top:117.50px;width:42.60px;height:8.50px;background:#03619a;"></div>
<div style="position:absolute;left:255.40px;top:119.00px;width:42.60px;height:5.55px;text-align:center;padding:0 0px;box-sizing:border-box;overflow:hidden;white-space:nowrap;font-size:5.55px;font-weight:bold;color:#fff;transform:scaleY(1.1);transform-origin:0 84.65%;">Aset Terpakai</div>
<div style="position:absolute;left:255.40px;top:128.00px;width:42.60px;height:5.6px;text-align:center;padding:0 0px;box-sizing:border-box;overflow:hidden;white-space:nowrap;font-size:5.6px;font-weight:normal;color:#222;transform:scaleY(1.18);transform-origin:0 84.65%;">Rp27.700.000</div>
<div style="position:absolute;left:255.00px;top:134.00px;width:43.00px;height:1.00px;background:repeating-linear-gradient(90deg,#bdbdbd 0 1px,transparent 1px 2px);"></div>
<div style="position:absolute;left:255.00px;top:126.00px;width:1.00px;height:9.00px;background:repeating-linear-gradient(180deg,#bdbdbd 0 1px,transparent 1px 2px);"></div>
<div style="position:absolute;left:297.00px;top:126.00px;width:1.00px;height:9.00px;background:repeating-linear-gradient(180deg,#bdbdbd 0 1px,transparent 1px 2px);"></div>
<div style="position:absolute;left:305.50px;top:117.50px;width:42.90px;height:8.50px;background:#03619a;"></div>
<div style="position:absolute;left:305.50px;top:119.00px;width:42.90px;height:5.55px;text-align:center;padding:0 0px;box-sizing:border-box;overflow:hidden;white-space:nowrap;font-size:5.55px;font-weight:bold;color:#fff;transform:scaleY(1.1);transform-origin:0 84.65%;">Aset Rusak</div>
<div style="position:absolute;left:305.50px;top:128.00px;width:42.90px;height:5.6px;text-align:center;padding:0 0px;box-sizing:border-box;overflow:hidden;white-space:nowrap;font-size:5.6px;font-weight:normal;color:#222;transform:scaleY(1.18);transform-origin:0 84.65%;">Rp3.200.000</div>
<div style="position:absolute;left:305.00px;top:134.00px;width:44.00px;height:1.00px;background:repeating-linear-gradient(90deg,#bdbdbd 0 1px,transparent 1px 2px);"></div>
<div style="position:absolute;left:305.00px;top:126.00px;width:1.00px;height:9.00px;background:repeating-linear-gradient(180deg,#bdbdbd 0 1px,transparent 1px 2px);"></div>
<div style="position:absolute;left:348.00px;top:126.00px;width:1.00px;height:9.00px;background:repeating-linear-gradient(180deg,#bdbdbd 0 1px,transparent 1px 2px);"></div>
<div style="position:absolute;left:23.50px;top:186.50px;width:84.10px;height:9.00px;background:#03619a;"></div>
<div style="position:absolute;left:23.50px;top:190.00px;width:42.10px;height:5.6px;text-align:center;padding:0 1.3px;box-sizing:border-box;overflow:hidden;white-space:nowrap;font-size:5.6px;font-weight:bold;color:#fff;transform:scaleY(1.1);transform-origin:0 84.65%;">Filter</div>
<div style="position:absolute;left:65.10px;top:186.50px;width:1.00px;height:9.00px;background:#0a3f66;"></div>
<div style="position:absolute;left:65.60px;top:190.00px;width:42.00px;height:5.6px;text-align:center;padding:0 1.3px;box-sizing:border-box;overflow:hidden;white-space:nowrap;font-size:5.6px;font-weight:bold;color:#fff;transform:scaleY(1.1);transform-origin:0 84.65%;">Select Date</div>
<div style="position:absolute;left:23.50px;top:195.50px;width:42.10px;height:9.00px;background:#c9daf8;"></div>
<div style="position:absolute;left:65.60px;top:195.50px;width:42.00px;height:9.00px;background:#d9ead3;"></div>
<div style="position:absolute;left:23.50px;top:199.00px;width:42.10px;height:5.6px;text-align:center;padding:0 1.3px;box-sizing:border-box;overflow:hidden;white-space:nowrap;font-size:5.6px;font-weight:bold;color:#111;transform:scaleY(1.1);transform-origin:0 84.65%;">Start Date</div>
<div style="position:absolute;left:65.60px;top:199.00px;width:42.00px;height:5.6px;text-align:right;padding:0 1.3px;box-sizing:border-box;overflow:hidden;white-space:nowrap;font-size:5.6px;font-weight:normal;color:#111;transform:scaleY(1.1);transform-origin:0 84.65%;">7/1/2025</div>
<div style="position:absolute;left:23.00px;top:195.00px;width:43.00px;height:1.00px;background:repeating-linear-gradient(90deg,#bdbdbd 0 1px,transparent 1px 2px);"></div>
<div style="position:absolute;left:23.00px;top:204.00px;width:43.00px;height:1.00px;background:repeating-linear-gradient(90deg,#bdbdbd 0 1px,transparent 1px 2px);"></div>
<div style="position:absolute;left:23.00px;top:195.00px;width:1.00px;height:10.00px;background:repeating-linear-gradient(180deg,#bdbdbd 0 1px,transparent 1px 2px);"></div>
<div style="position:absolute;left:65.00px;top:195.00px;width:1.00px;height:10.00px;background:repeating-linear-gradient(180deg,#bdbdbd 0 1px,transparent 1px 2px);"></div>
<div style="position:absolute;left:65.00px;top:195.00px;width:43.00px;height:1.00px;background:repeating-linear-gradient(90deg,#bdbdbd 0 1px,transparent 1px 2px);"></div>
<div style="position:absolute;left:65.00px;top:204.00px;width:43.00px;height:1.00px;background:repeating-linear-gradient(90deg,#bdbdbd 0 1px,transparent 1px 2px);"></div>
<div style="position:absolute;left:65.00px;top:195.00px;width:1.00px;height:10.00px;background:repeating-linear-gradient(180deg,#bdbdbd 0 1px,transparent 1px 2px);"></div>
<div style="position:absolute;left:107.00px;top:195.00px;width:1.00px;height:10.00px;background:repeating-linear-gradient(180deg,#bdbdbd 0 1px,transparent 1px 2px);"></div>
<div style="position:absolute;left:23.50px;top:204.50px;width:42.10px;height:8.50px;background:#c9daf8;"></div>
<div style="position:absolute;left:65.60px;top:204.50px;width:42.00px;height:8.50px;background:#d9ead3;"></div>
<div style="position:absolute;left:23.50px;top:207.00px;width:42.10px;height:5.6px;text-align:center;padding:0 1.3px;box-sizing:border-box;overflow:hidden;white-space:nowrap;font-size:5.6px;font-weight:bold;color:#111;transform:scaleY(1.1);transform-origin:0 84.65%;">End Date</div>
<div style="position:absolute;left:65.60px;top:207.00px;width:42.00px;height:5.6px;text-align:right;padding:0 1.3px;box-sizing:border-box;overflow:hidden;white-space:nowrap;font-size:5.6px;font-weight:normal;color:#111;transform:scaleY(1.1);transform-origin:0 84.65%;">11/22/2025</div>
<div style="position:absolute;left:23.00px;top:204.00px;width:43.00px;height:1.00px;background:repeating-linear-gradient(90deg,#bdbdbd 0 1px,transparent 1px 2px);"></div>
<div style="position:absolute;left:23.00px;top:212.00px;width:43.00px;height:1.00px;background:repeating-linear-gradient(90deg,#bdbdbd 0 1px,transparent 1px 2px);"></div>
<div style="position:absolute;left:23.00px;top:204.00px;width:1.00px;height:9.00px;background:repeating-linear-gradient(180deg,#bdbdbd 0 1px,transparent 1px 2px);"></div>
<div style="position:absolute;left:65.00px;top:204.00px;width:1.00px;height:9.00px;background:repeating-linear-gradient(180deg,#bdbdbd 0 1px,transparent 1px 2px);"></div>
<div style="position:absolute;left:65.00px;top:204.00px;width:43.00px;height:1.00px;background:repeating-linear-gradient(90deg,#bdbdbd 0 1px,transparent 1px 2px);"></div>
<div style="position:absolute;left:65.00px;top:212.00px;width:43.00px;height:1.00px;background:repeating-linear-gradient(90deg,#bdbdbd 0 1px,transparent 1px 2px);"></div>
<div style="position:absolute;left:65.00px;top:204.00px;width:1.00px;height:9.00px;background:repeating-linear-gradient(180deg,#bdbdbd 0 1px,transparent 1px 2px);"></div>
<div style="position:absolute;left:107.00px;top:204.00px;width:1.00px;height:9.00px;background:repeating-linear-gradient(180deg,#bdbdbd 0 1px,transparent 1px 2px);"></div>
<div style="position:absolute;left:23.50px;top:225.00px;width:126.50px;height:5.6px;text-align:left;padding:0 1.5px;box-sizing:border-box;overflow:hidden;white-space:nowrap;font-size:5.6px;font-weight:bold;color:#333;transform:scaleY(1.1);transform-origin:0 84.65%;letter-spacing:0.05px;">INCOME STATEMENT</div>
<div style="position:absolute;left:23.50px;top:230.50px;width:126.50px;height:8.80px;background:#03619a;"></div>
<div style="position:absolute;left:23.50px;top:234.00px;width:126.50px;height:5.6px;text-align:left;padding:0 1.5px;box-sizing:border-box;overflow:hidden;white-space:nowrap;font-size:5.6px;font-weight:bold;color:#fff;transform:scaleY(1.1);transform-origin:0 84.65%;">Total Penjualan</div>
<div style="position:absolute;left:23.50px;top:234.00px;width:126.50px;height:5.6px;text-align:right;padding:0 1.3px;box-sizing:border-box;overflow:hidden;white-space:nowrap;font-size:5.6px;font-weight:bold;color:#fff;transform:scaleY(1.1);transform-origin:0 84.65%;">Rp4.150.000</div>
<div style="position:absolute;left:23.50px;top:242.00px;width:126.50px;height:5.6px;text-align:left;padding:0 1.5px;box-sizing:border-box;overflow:hidden;white-space:nowrap;font-size:5.6px;font-weight:bold;color:#276d9b;transform:scaleY(1.1);transform-origin:0 84.65%;">Dana masuk</div>
<div style="position:absolute;left:23.50px;top:242.00px;width:126.50px;height:5.6px;text-align:right;padding:0 1.3px;box-sizing:border-box;overflow:hidden;white-space:nowrap;font-size:5.6px;font-weight:bold;color:#276d9b;transform:scaleY(1.1);transform-origin:0 84.65%;">Rp1.970.000</div>
<div style="position:absolute;left:23.50px;top:248.00px;width:126.50px;height:9.00px;background:#f4cccc;"></div>
<div style="position:absolute;left:23.50px;top:251.00px;width:126.50px;height:5.6px;text-align:left;padding:0 1.5px;box-sizing:border-box;overflow:hidden;white-space:nowrap;font-size:5.6px;font-weight:bold;color:#276d9b;transform:scaleY(1.1);transform-origin:0 84.65%;">Dana Tertahan Customer</div>
<div style="position:absolute;left:23.50px;top:251.00px;width:126.50px;height:5.6px;text-align:right;padding:0 1.3px;box-sizing:border-box;overflow:hidden;white-space:nowrap;font-size:5.6px;font-weight:bold;color:#276d9b;transform:scaleY(1.1);transform-origin:0 84.65%;">-Rp2.180.000</div>
<div style="position:absolute;left:23.50px;top:265.80px;width:126.50px;height:8.70px;background:#03619a;"></div>
<div style="position:absolute;left:23.50px;top:269.00px;width:126.50px;height:5.6px;text-align:left;padding:0 1.5px;box-sizing:border-box;overflow:hidden;white-space:nowrap;font-size:5.6px;font-weight:bold;color:#fff;transform:scaleY(1.1);transform-origin:0 84.65%;">Pengeluaran</div>
<div style="position:absolute;left:23.50px;top:269.00px;width:126.50px;height:5.6px;text-align:right;padding:0 1.3px;box-sizing:border-box;overflow:hidden;white-space:nowrap;font-size:5.6px;font-weight:bold;color:#fff;transform:scaleY(1.1);transform-origin:0 84.65%;">Rp2.524.500</div>
<div style="position:absolute;left:23.50px;top:278.00px;width:126.50px;height:5.6px;text-align:left;padding:0 1.5px;box-sizing:border-box;overflow:hidden;white-space:nowrap;font-size:5.6px;font-weight:bold;color:#276d9b;transform:scaleY(1.1);transform-origin:0 84.65%;">Packing</div>
<div style="position:absolute;left:23.50px;top:278.00px;width:126.50px;height:5.6px;text-align:right;padding:0 1.3px;box-sizing:border-box;overflow:hidden;white-space:nowrap;font-size:5.6px;font-weight:bold;color:#276d9b;transform:scaleY(1.1);transform-origin:0 84.65%;">Rp7.500</div>
<div style="position:absolute;left:23.50px;top:286.00px;width:126.50px;height:5.6px;text-align:left;padding:0 1.5px;box-sizing:border-box;overflow:hidden;white-space:nowrap;font-size:5.6px;font-weight:bold;color:#276d9b;transform:scaleY(1.1);transform-origin:0 84.65%;">Admin</div>
<div style="position:absolute;left:23.50px;top:286.00px;width:126.50px;height:5.6px;text-align:right;padding:0 1.3px;box-sizing:border-box;overflow:hidden;white-space:nowrap;font-size:5.6px;font-weight:bold;color:#276d9b;transform:scaleY(1.1);transform-origin:0 84.65%;">Rp50.000</div>
<div style="position:absolute;left:23.50px;top:295.00px;width:126.50px;height:5.6px;text-align:left;padding:0 1.5px;box-sizing:border-box;overflow:hidden;white-space:nowrap;font-size:5.6px;font-weight:bold;color:#276d9b;transform:scaleY(1.1);transform-origin:0 84.65%;">Operasional</div>
<div style="position:absolute;left:23.50px;top:295.00px;width:126.50px;height:5.6px;text-align:right;padding:0 1.3px;box-sizing:border-box;overflow:hidden;white-space:nowrap;font-size:5.6px;font-weight:bold;color:#276d9b;transform:scaleY(1.1);transform-origin:0 84.65%;">Rp111.000</div>
<div style="position:absolute;left:23.50px;top:304.00px;width:126.50px;height:5.6px;text-align:left;padding:0 1.5px;box-sizing:border-box;overflow:hidden;white-space:nowrap;font-size:5.6px;font-weight:bold;color:#276d9b;transform:scaleY(1.1);transform-origin:0 84.65%;">Gaji Karyawan</div>
<div style="position:absolute;left:23.50px;top:304.00px;width:126.50px;height:5.6px;text-align:right;padding:0 1.3px;box-sizing:border-box;overflow:hidden;white-space:nowrap;font-size:5.6px;font-weight:bold;color:#276d9b;transform:scaleY(1.1);transform-origin:0 84.65%;">Rp23.000</div>
<div style="position:absolute;left:23.50px;top:313.00px;width:126.50px;height:5.6px;text-align:left;padding:0 1.5px;box-sizing:border-box;overflow:hidden;white-space:nowrap;font-size:5.6px;font-weight:bold;color:#276d9b;transform:scaleY(1.1);transform-origin:0 84.65%;">Produksi</div>
<div style="position:absolute;left:23.50px;top:313.00px;width:126.50px;height:5.6px;text-align:right;padding:0 1.3px;box-sizing:border-box;overflow:hidden;white-space:nowrap;font-size:5.6px;font-weight:bold;color:#276d9b;transform:scaleY(1.1);transform-origin:0 84.65%;">Rp650.000</div>
<div style="position:absolute;left:23.50px;top:321.00px;width:126.50px;height:5.6px;text-align:left;padding:0 1.5px;box-sizing:border-box;overflow:hidden;white-space:nowrap;font-size:5.6px;font-weight:bold;color:#276d9b;transform:scaleY(1.1);transform-origin:0 84.65%;">Lain Lain</div>
<div style="position:absolute;left:23.50px;top:321.00px;width:126.50px;height:5.6px;text-align:right;padding:0 1.3px;box-sizing:border-box;overflow:hidden;white-space:nowrap;font-size:5.6px;font-weight:bold;color:#276d9b;transform:scaleY(1.1);transform-origin:0 84.65%;">Rp23.000</div>
<div style="position:absolute;left:23.50px;top:327.00px;width:126.50px;height:8.80px;background:#f4cccc;"></div>
<div style="position:absolute;left:23.50px;top:330.00px;width:126.50px;height:5.6px;text-align:left;padding:0 1.5px;box-sizing:border-box;overflow:hidden;white-space:nowrap;font-size:5.6px;font-weight:bold;color:#276d9b;transform:scaleY(1.1);transform-origin:0 84.65%;">Hutang Pengeluaran</div>
<div style="position:absolute;left:23.50px;top:330.00px;width:126.50px;height:5.6px;text-align:right;padding:0 1.3px;box-sizing:border-box;overflow:hidden;white-space:nowrap;font-size:5.6px;font-weight:bold;color:#276d9b;transform:scaleY(1.1);transform-origin:0 84.65%;">-Rp1.660.000</div>
<div style="position:absolute;left:23.50px;top:344.50px;width:126.50px;height:8.80px;background:#03619a;"></div>
<div style="position:absolute;left:23.50px;top:348.00px;width:126.50px;height:5.6px;text-align:left;padding:0 1.5px;box-sizing:border-box;overflow:hidden;white-space:nowrap;font-size:5.6px;font-weight:bold;color:#fff;transform:scaleY(1.1);transform-origin:0 84.65%;">Dana Tertahan</div>
<div style="position:absolute;left:23.50px;top:348.00px;width:126.50px;height:5.6px;text-align:right;padding:0 1.3px;box-sizing:border-box;overflow:hidden;white-space:nowrap;font-size:5.6px;font-weight:bold;color:#fff;transform:scaleY(1.1);transform-origin:0 84.65%;">Rp520.000</div>
<div style="position:absolute;left:23.50px;top:353.30px;width:126.50px;height:8.90px;background:#03619a;"></div>
<div style="position:absolute;left:23.50px;top:356.00px;width:126.50px;height:5.6px;text-align:left;padding:0 1.5px;box-sizing:border-box;overflow:hidden;white-space:nowrap;font-size:5.6px;font-weight:bold;color:#fff;transform:scaleY(1.1);transform-origin:0 84.65%;">Profit Bersih</div>
<div style="position:absolute;left:23.50px;top:356.00px;width:126.50px;height:5.6px;text-align:right;padding:0 1.3px;box-sizing:border-box;overflow:hidden;white-space:nowrap;font-size:5.6px;font-weight:bold;color:#fff;transform:scaleY(1.1);transform-origin:0 84.65%;">Rp1.625.500</div>
<div style="position:absolute;left:23.00px;top:247.00px;width:127.00px;height:1.00px;background:repeating-linear-gradient(90deg,#bdbdbd 0 1px,transparent 1px 2px);"></div>
<div style="position:absolute;left:23.00px;top:239.00px;width:1.00px;height:9.00px;background:repeating-linear-gradient(180deg,#bdbdbd 0 1px,transparent 1px 2px);"></div>
<div style="position:absolute;left:149.00px;top:239.00px;width:1.00px;height:9.00px;background:repeating-linear-gradient(180deg,#bdbdbd 0 1px,transparent 1px 2px);"></div>
<div style="position:absolute;left:23.00px;top:326.00px;width:127.00px;height:1.00px;background:repeating-linear-gradient(90deg,#bdbdbd 0 1px,transparent 1px 2px);"></div>
<div style="position:absolute;left:23.00px;top:274.00px;width:1.00px;height:53.00px;background:repeating-linear-gradient(180deg,#bdbdbd 0 1px,transparent 1px 2px);"></div>
<div style="position:absolute;left:149.00px;top:274.00px;width:1.00px;height:53.00px;background:repeating-linear-gradient(180deg,#bdbdbd 0 1px,transparent 1px 2px);"></div>
<div style="position:absolute;left:482.40px;top:89.50px;width:313.60px;height:9.00px;background:#03619a;"></div>
<div style="position:absolute;left:482.40px;top:92.00px;width:47.00px;height:5.6px;text-align:left;padding:0 1.2px;box-sizing:border-box;overflow:hidden;white-space:nowrap;font-size:5.6px;font-weight:bold;color:#fff;transform:scaleY(1.1);transform-origin:0 84.65%;">Tanggal Pesanan</div>
<div style="position:absolute;left:529.40px;top:92.00px;width:47.10px;height:5.6px;text-align:left;padding:0 1.2px;box-sizing:border-box;overflow:hidden;white-space:nowrap;font-size:5.6px;font-weight:bold;color:#fff;transform:scaleY(1.1);transform-origin:0 84.65%;">Tipe Transaksi</div>
<div style="position:absolute;left:576.50px;top:92.00px;width:48.90px;height:5.6px;text-align:left;padding:0 1.2px;box-sizing:border-box;overflow:hidden;white-space:nowrap;font-size:5.6px;font-weight:bold;color:#fff;transform:scaleY(1.1);transform-origin:0 84.65%;">Nama/Item</div>
<div style="position:absolute;left:625.40px;top:92.00px;width:70.00px;height:5.6px;text-align:left;padding:0 1.2px;box-sizing:border-box;overflow:hidden;white-space:nowrap;font-size:5.6px;font-weight:bold;color:#fff;transform:scaleY(1.1);transform-origin:0 84.65%;">Produk</div>
<div style="position:absolute;left:695.40px;top:92.00px;width:45.30px;height:5.6px;text-align:left;padding:0 1.2px;box-sizing:border-box;overflow:hidden;white-space:nowrap;font-size:5.6px;font-weight:bold;color:#fff;transform:scaleY(1.1);transform-origin:0 84.65%;">Nama/Vendor</div>
<div style="position:absolute;left:740.70px;top:92.00px;width:37.80px;height:5.6px;text-align:left;padding:0 1.2px;box-sizing:border-box;overflow:hidden;white-space:nowrap;font-size:5.6px;font-weight:bold;color:#fff;transform:scaleY(1.1);transform-origin:0 84.65%;">Status Barang</div>
<div style="position:absolute;left:778.50px;top:92.00px;width:17.50px;height:5.6px;text-align:left;padding:0 1.2px;box-sizing:border-box;overflow:hidden;white-space:nowrap;font-size:5.6px;font-weight:bold;color:#fff;transform:scaleY(1.1);transform-origin:0 84.65%;">Status</div>
<div style="position:absolute;left:482.40px;top:102.00px;width:47.00px;height:5.6px;text-align:right;padding:0 1.5px;box-sizing:border-box;overflow:hidden;white-space:nowrap;font-size:5.6px;font-weight:normal;color:#000;transform:scaleY(1.1);transform-origin:0 84.65%;">04/09/2025</div>
<div style="position:absolute;left:529.40px;top:102.00px;width:47.10px;height:5.6px;text-align:left;padding:0 1.2px;box-sizing:border-box;overflow:hidden;white-space:nowrap;font-size:5.6px;font-weight:normal;color:#000;transform:scaleY(1.1);transform-origin:0 84.65%;">Jual (In)</div>
<div style="position:absolute;left:576.50px;top:102.00px;width:48.90px;height:5.6px;text-align:left;padding:0 1.2px;box-sizing:border-box;overflow:hidden;white-space:nowrap;font-size:5.6px;font-weight:normal;color:#000;transform:scaleY(1.1);transform-origin:0 84.65%;">Jilbab</div>
<div style="position:absolute;left:625.40px;top:102.00px;width:70.00px;height:5.6px;text-align:left;padding:0 1.2px;box-sizing:border-box;overflow:hidden;white-space:nowrap;font-size:5.6px;font-weight:normal;color:#000;transform:scaleY(1.1);transform-origin:0 84.65%;">Pashmina Ceruty Premium</div>
<div style="position:absolute;left:740.70px;top:102.00px;width:37.80px;height:5.6px;text-align:left;padding:0 1.2px;box-sizing:border-box;overflow:hidden;white-space:nowrap;font-size:5.6px;font-weight:normal;color:#000;transform:scaleY(1.1);transform-origin:0 84.65%;">Diterima</div>
<div style="position:absolute;left:778.50px;top:102.00px;width:17.50px;height:5.6px;text-align:left;padding:0 1.2px;box-sizing:border-box;overflow:hidden;white-space:nowrap;font-size:5.6px;font-weight:normal;color:#000;transform:scaleY(1.1);transform-origin:0 84.65%;">Lunas</div>
<div style="position:absolute;left:482.40px;top:111.00px;width:47.00px;height:5.6px;text-align:right;padding:0 1.5px;box-sizing:border-box;overflow:hidden;white-space:nowrap;font-size:5.6px;font-weight:normal;color:#000;transform:scaleY(1.1);transform-origin:0 84.65%;">04/09/2025</div>
<div style="position:absolute;left:529.40px;top:111.00px;width:47.10px;height:5.6px;text-align:left;padding:0 1.2px;box-sizing:border-box;overflow:hidden;white-space:nowrap;font-size:5.6px;font-weight:normal;color:#000;transform:scaleY(1.1);transform-origin:0 84.65%;">Produksi (Out)</div>
<div style="position:absolute;left:576.50px;top:111.00px;width:48.90px;height:5.6px;text-align:left;padding:0 1.2px;box-sizing:border-box;overflow:hidden;white-space:nowrap;font-size:5.6px;font-weight:normal;color:#000;transform:scaleY(1.1);transform-origin:0 84.65%;">Pulau Raja Ampat</div>
<div style="position:absolute;left:625.40px;top:111.00px;width:70.00px;height:5.6px;text-align:left;padding:0 1.2px;box-sizing:border-box;overflow:hidden;white-space:nowrap;font-size:5.6px;font-weight:normal;color:#000;transform:scaleY(1.1);transform-origin:0 84.65%;">Hijab Motif Floral</div>
<div style="position:absolute;left:695.40px;top:111.00px;width:45.30px;height:5.6px;text-align:left;padding:0 1.2px;box-sizing:border-box;overflow:hidden;white-space:nowrap;font-size:5.6px;font-weight:normal;color:#000;transform:scaleY(1.1);transform-origin:0 84.65%;">Tuhan</div>
<div style="position:absolute;left:740.70px;top:111.00px;width:37.80px;height:5.6px;text-align:left;padding:0 1.2px;box-sizing:border-box;overflow:hidden;white-space:nowrap;font-size:5.6px;font-weight:normal;color:#000;transform:scaleY(1.1);transform-origin:0 84.65%;">Diterima</div>
<div style="position:absolute;left:778.50px;top:111.00px;width:17.50px;height:5.6px;text-align:left;padding:0 1.2px;box-sizing:border-box;overflow:hidden;white-space:nowrap;font-size:5.6px;font-weight:normal;color:#000;transform:scaleY(1.1);transform-origin:0 84.65%;">Lunas</div>
<div style="position:absolute;left:482.40px;top:120.00px;width:47.00px;height:5.6px;text-align:right;padding:0 1.5px;box-sizing:border-box;overflow:hidden;white-space:nowrap;font-size:5.6px;font-weight:normal;color:#000;transform:scaleY(1.1);transform-origin:0 84.65%;">06/09/2025</div>
<div style="position:absolute;left:529.40px;top:120.00px;width:47.10px;height:5.6px;text-align:left;padding:0 1.2px;box-sizing:border-box;overflow:hidden;white-space:nowrap;font-size:5.6px;font-weight:normal;color:#000;transform:scaleY(1.1);transform-origin:0 84.65%;">Gaji (Out)</div>
<div style="position:absolute;left:576.50px;top:120.00px;width:48.90px;height:5.6px;text-align:left;padding:0 1.2px;box-sizing:border-box;overflow:hidden;white-space:nowrap;font-size:5.6px;font-weight:normal;color:#000;transform:scaleY(1.1);transform-origin:0 84.65%;">Gaji Bahlil</div>
<div style="position:absolute;left:695.40px;top:120.00px;width:45.30px;height:5.6px;text-align:left;padding:0 1.2px;box-sizing:border-box;overflow:hidden;white-space:nowrap;font-size:5.6px;font-weight:normal;color:#000;transform:scaleY(1.1);transform-origin:0 84.65%;">Bahlil Darusalam</div>
<div style="position:absolute;left:740.70px;top:120.00px;width:37.80px;height:5.6px;text-align:left;padding:0 1.2px;box-sizing:border-box;overflow:hidden;white-space:nowrap;font-size:5.6px;font-weight:normal;color:#000;transform:scaleY(1.1);transform-origin:0 84.65%;">Diterima</div>
<div style="position:absolute;left:778.50px;top:120.00px;width:17.50px;height:5.6px;text-align:left;padding:0 1.2px;box-sizing:border-box;overflow:hidden;white-space:nowrap;font-size:5.6px;font-weight:normal;color:#000;transform:scaleY(1.1);transform-origin:0 84.65%;">Lunas</div>
<div style="position:absolute;left:482.40px;top:128.00px;width:47.00px;height:5.6px;text-align:right;padding:0 1.5px;box-sizing:border-box;overflow:hidden;white-space:nowrap;font-size:5.6px;font-weight:normal;color:#000;transform:scaleY(1.1);transform-origin:0 84.65%;">10/10/2025</div>
<div style="position:absolute;left:529.40px;top:128.00px;width:47.10px;height:5.6px;text-align:left;padding:0 1.2px;box-sizing:border-box;overflow:hidden;white-space:nowrap;font-size:5.6px;font-weight:normal;color:#000;transform:scaleY(1.1);transform-origin:0 84.65%;">Lain-Lain (Out)</div>
<div style="position:absolute;left:576.50px;top:128.00px;width:48.90px;height:5.6px;text-align:left;padding:0 1.2px;box-sizing:border-box;overflow:hidden;white-space:nowrap;font-size:5.6px;font-weight:normal;color:#000;transform:scaleY(1.1);transform-origin:0 84.65%;">Beli Es Krim</div>
<div style="position:absolute;left:695.40px;top:128.00px;width:45.30px;height:5.6px;text-align:left;padding:0 1.2px;box-sizing:border-box;overflow:hidden;white-space:nowrap;font-size:5.6px;font-weight:normal;color:#000;transform:scaleY(1.1);transform-origin:0 84.65%;">Owner</div>
<div style="position:absolute;left:740.70px;top:128.00px;width:37.80px;height:5.6px;text-align:left;padding:0 1.2px;box-sizing:border-box;overflow:hidden;white-space:nowrap;font-size:5.6px;font-weight:normal;color:#000;transform:scaleY(1.1);transform-origin:0 84.65%;">Telah dikirim</div>
<div style="position:absolute;left:778.50px;top:128.00px;width:17.50px;height:5.6px;text-align:left;padding:0 1.2px;box-sizing:border-box;overflow:hidden;white-space:nowrap;font-size:5.6px;font-weight:normal;color:#000;transform:scaleY(1.1);transform-origin:0 84.65%;">Lunas</div>
<div style="position:absolute;left:482.40px;top:137.00px;width:47.00px;height:5.6px;text-align:right;padding:0 1.5px;box-sizing:border-box;overflow:hidden;white-space:nowrap;font-size:5.6px;font-weight:normal;color:#000;transform:scaleY(1.1);transform-origin:0 84.65%;">08/10/2025</div>
<div style="position:absolute;left:529.40px;top:137.00px;width:47.10px;height:5.6px;text-align:left;padding:0 1.2px;box-sizing:border-box;overflow:hidden;white-space:nowrap;font-size:5.6px;font-weight:normal;color:#000;transform:scaleY(1.1);transform-origin:0 84.65%;">Jual (In)</div>
<div style="position:absolute;left:576.50px;top:137.00px;width:48.90px;height:5.6px;text-align:left;padding:0 1.2px;box-sizing:border-box;overflow:hidden;white-space:nowrap;font-size:5.6px;font-weight:normal;color:#000;transform:scaleY(1.1);transform-origin:0 84.65%;">Jilbab</div>
<div style="position:absolute;left:625.40px;top:137.00px;width:70.00px;height:5.6px;text-align:left;padding:0 1.2px;box-sizing:border-box;overflow:hidden;white-space:nowrap;font-size:5.6px;font-weight:normal;color:#000;transform:scaleY(1.1);transform-origin:0 84.65%;">Inner Ciput Rajut</div>
<div style="position:absolute;left:740.70px;top:137.00px;width:37.80px;height:5.6px;text-align:left;padding:0 1.2px;box-sizing:border-box;overflow:hidden;white-space:nowrap;font-size:5.6px;font-weight:normal;color:#000;transform:scaleY(1.1);transform-origin:0 84.65%;">Dalam proses</div>
<div style="position:absolute;left:778.50px;top:137.00px;width:17.50px;height:5.6px;text-align:left;padding:0 1.2px;box-sizing:border-box;overflow:hidden;white-space:nowrap;font-size:5.6px;font-weight:normal;color:#000;transform:scaleY(1.1);transform-origin:0 84.65%;">Lunas</div>
<div style="position:absolute;left:482.40px;top:146.00px;width:47.00px;height:5.6px;text-align:right;padding:0 1.5px;box-sizing:border-box;overflow:hidden;white-space:nowrap;font-size:5.6px;font-weight:normal;color:#000;transform:scaleY(1.1);transform-origin:0 84.65%;">12/10/2025</div>
<div style="position:absolute;left:529.40px;top:146.00px;width:107.10px;height:5.6px;text-align:left;padding:0 1.2px;box-sizing:border-box;overflow:hidden;white-space:nowrap;font-size:5.6px;font-weight:normal;color:#000;transform:scaleY(1.1);transform-origin:0 84.65%;">Operasional (Out)</div>
<div style="position:absolute;left:576.50px;top:146.00px;width:48.90px;height:5.6px;text-align:left;padding:0 1.2px;box-sizing:border-box;overflow:hidden;white-space:nowrap;font-size:5.6px;font-weight:normal;color:#000;transform:scaleY(1.1);transform-origin:0 84.65%;">Hutang Kereta Api</div>
<div style="position:absolute;left:695.40px;top:146.00px;width:45.30px;height:5.6px;text-align:left;padding:0 1.2px;box-sizing:border-box;overflow:hidden;white-space:nowrap;font-size:5.6px;font-weight:normal;color:#000;transform:scaleY(1.1);transform-origin:0 84.65%;">Geng Solo</div>
<div style="position:absolute;left:740.70px;top:146.00px;width:37.80px;height:5.6px;text-align:left;padding:0 1.2px;box-sizing:border-box;overflow:hidden;white-space:nowrap;font-size:5.6px;font-weight:normal;color:#000;transform:scaleY(1.1);transform-origin:0 84.65%;">Diterima</div>
<div style="position:absolute;left:778.50px;top:146.00px;width:17.50px;height:5.6px;text-align:left;padding:0 1.2px;box-sizing:border-box;overflow:hidden;white-space:nowrap;font-size:5.6px;font-weight:normal;color:#000;transform:scaleY(1.1);transform-origin:0 84.65%;">Lunas</div>
<div style="position:absolute;left:482.40px;top:154.00px;width:47.00px;height:5.6px;text-align:right;padding:0 1.5px;box-sizing:border-box;overflow:hidden;white-space:nowrap;font-size:5.6px;font-weight:normal;color:#000;transform:scaleY(1.1);transform-origin:0 84.65%;">13/10/2025</div>
<div style="position:absolute;left:529.40px;top:154.00px;width:47.10px;height:5.6px;text-align:left;padding:0 1.2px;box-sizing:border-box;overflow:hidden;white-space:nowrap;font-size:5.6px;font-weight:normal;color:#000;transform:scaleY(1.1);transform-origin:0 84.65%;">Produksi (Out)</div>
<div style="position:absolute;left:576.50px;top:154.00px;width:48.90px;height:5.6px;text-align:left;padding:0 1.2px;box-sizing:border-box;overflow:hidden;white-space:nowrap;font-size:5.6px;font-weight:normal;color:#000;transform:scaleY(1.1);transform-origin:0 84.65%;">Tepung</div>
<div style="position:absolute;left:625.40px;top:154.00px;width:70.00px;height:5.6px;text-align:left;padding:0 1.2px;box-sizing:border-box;overflow:hidden;white-space:nowrap;font-size:5.6px;font-weight:normal;color:#000;transform:scaleY(1.1);transform-origin:0 84.65%;">Inner Ciput Rajut</div>
<div style="position:absolute;left:695.40px;top:154.00px;width:45.30px;height:5.6px;text-align:left;padding:0 1.2px;box-sizing:border-box;overflow:hidden;white-space:nowrap;font-size:5.6px;font-weight:normal;color:#000;transform:scaleY(1.1);transform-origin:0 84.65%;">Tiga Roda</div>
<div style="position:absolute;left:740.70px;top:154.00px;width:37.80px;height:5.6px;text-align:left;padding:0 1.2px;box-sizing:border-box;overflow:hidden;white-space:nowrap;font-size:5.6px;font-weight:normal;color:#000;transform:scaleY(1.1);transform-origin:0 84.65%;">Telah dikirim</div>
<div style="position:absolute;left:778.50px;top:154.00px;width:17.50px;height:5.6px;text-align:left;padding:0 1.2px;box-sizing:border-box;overflow:hidden;white-space:nowrap;font-size:5.6px;font-weight:normal;color:#000;transform:scaleY(1.1);transform-origin:0 84.65%;">Hutang</div>
<div style="position:absolute;left:482.40px;top:163.00px;width:47.00px;height:5.6px;text-align:right;padding:0 1.5px;box-sizing:border-box;overflow:hidden;white-space:nowrap;font-size:5.6px;font-weight:normal;color:#000;transform:scaleY(1.1);transform-origin:0 84.65%;">06/10/2025</div>
<div style="position:absolute;left:529.40px;top:163.00px;width:47.10px;height:5.6px;text-align:left;padding:0 1.2px;box-sizing:border-box;overflow:hidden;white-space:nowrap;font-size:5.6px;font-weight:normal;color:#000;transform:scaleY(1.1);transform-origin:0 84.65%;">Jual (In)</div>
<div style="position:absolute;left:576.50px;top:163.00px;width:48.90px;height:5.6px;text-align:left;padding:0 1.2px;box-sizing:border-box;overflow:hidden;white-space:nowrap;font-size:5.6px;font-weight:normal;color:#000;transform:scaleY(1.1);transform-origin:0 84.65%;">Jilbab</div>
<div style="position:absolute;left:625.40px;top:163.00px;width:70.00px;height:5.6px;text-align:left;padding:0 1.2px;box-sizing:border-box;overflow:hidden;white-space:nowrap;font-size:5.6px;font-weight:normal;color:#000;transform:scaleY(1.1);transform-origin:0 84.65%;">Inner Ciput Rajut</div>
<div style="position:absolute;left:740.70px;top:163.00px;width:37.80px;height:5.6px;text-align:left;padding:0 1.2px;box-sizing:border-box;overflow:hidden;white-space:nowrap;font-size:5.6px;font-weight:normal;color:#000;transform:scaleY(1.1);transform-origin:0 84.65%;">Dalam proses</div>
<div style="position:absolute;left:778.50px;top:163.00px;width:17.50px;height:5.6px;text-align:left;padding:0 1.2px;box-sizing:border-box;overflow:hidden;white-space:nowrap;font-size:5.6px;font-weight:normal;color:#000;transform:scaleY(1.1);transform-origin:0 84.65%;">Lunas</div>
<div style="position:absolute;left:482.40px;top:172.00px;width:47.00px;height:5.6px;text-align:right;padding:0 1.5px;box-sizing:border-box;overflow:hidden;white-space:nowrap;font-size:5.6px;font-weight:normal;color:#000;transform:scaleY(1.1);transform-origin:0 84.65%;">11/10/2025</div>
<div style="position:absolute;left:529.40px;top:172.00px;width:47.10px;height:5.6px;text-align:left;padding:0 1.2px;box-sizing:border-box;overflow:hidden;white-space:nowrap;font-size:5.6px;font-weight:normal;color:#000;transform:scaleY(1.1);transform-origin:0 84.65%;">Jual (In)</div>
<div style="position:absolute;left:576.50px;top:172.00px;width:48.90px;height:5.6px;text-align:left;padding:0 1.2px;box-sizing:border-box;overflow:hidden;white-space:nowrap;font-size:5.6px;font-weight:normal;color:#000;transform:scaleY(1.1);transform-origin:0 84.65%;">Jilbab</div>
<div style="position:absolute;left:625.40px;top:172.00px;width:70.00px;height:5.6px;text-align:left;padding:0 1.2px;box-sizing:border-box;overflow:hidden;white-space:nowrap;font-size:5.6px;font-weight:normal;color:#000;transform:scaleY(1.1);transform-origin:0 84.65%;">Inner Ciput Rajut</div>
<div style="position:absolute;left:740.70px;top:172.00px;width:37.80px;height:5.6px;text-align:left;padding:0 1.2px;box-sizing:border-box;overflow:hidden;white-space:nowrap;font-size:5.6px;font-weight:normal;color:#000;transform:scaleY(1.1);transform-origin:0 84.65%;">Dalam proses</div>
<div style="position:absolute;left:778.50px;top:172.00px;width:17.50px;height:5.6px;text-align:left;padding:0 1.2px;box-sizing:border-box;overflow:hidden;white-space:nowrap;font-size:5.6px;font-weight:normal;color:#000;transform:scaleY(1.1);transform-origin:0 84.65%;">Lunas</div>
<div style="position:absolute;left:482.40px;top:181.00px;width:47.00px;height:5.6px;text-align:right;padding:0 1.5px;box-sizing:border-box;overflow:hidden;white-space:nowrap;font-size:5.6px;font-weight:normal;color:#000;transform:scaleY(1.1);transform-origin:0 84.65%;">12/10/2025</div>
<div style="position:absolute;left:529.40px;top:181.00px;width:47.10px;height:5.6px;text-align:left;padding:0 1.2px;box-sizing:border-box;overflow:hidden;white-space:nowrap;font-size:5.6px;font-weight:normal;color:#000;transform:scaleY(1.1);transform-origin:0 84.65%;">Jual (In)</div>
<div style="position:absolute;left:576.50px;top:181.00px;width:48.90px;height:5.6px;text-align:left;padding:0 1.2px;box-sizing:border-box;overflow:hidden;white-space:nowrap;font-size:5.6px;font-weight:normal;color:#000;transform:scaleY(1.1);transform-origin:0 84.65%;">Jilbab</div>
<div style="position:absolute;left:625.40px;top:181.00px;width:70.00px;height:5.6px;text-align:left;padding:0 1.2px;box-sizing:border-box;overflow:hidden;white-space:nowrap;font-size:5.6px;font-weight:normal;color:#000;transform:scaleY(1.1);transform-origin:0 84.65%;">Hijab Voal Motif</div>
<div style="position:absolute;left:740.70px;top:181.00px;width:37.80px;height:5.6px;text-align:left;padding:0 1.2px;box-sizing:border-box;overflow:hidden;white-space:nowrap;font-size:5.6px;font-weight:normal;color:#000;transform:scaleY(1.1);transform-origin:0 84.65%;">Dalam proses</div>
<div style="position:absolute;left:778.50px;top:181.00px;width:17.50px;height:5.6px;text-align:left;padding:0 1.2px;box-sizing:border-box;overflow:hidden;white-space:nowrap;font-size:5.6px;font-weight:normal;color:#000;transform:scaleY(1.1);transform-origin:0 84.65%;">Hutang</div>
<svg style="position:absolute;left:0;top:0" width="800" height="410" viewBox="0 0 800 410"><defs><clipPath id="ic"><rect x="20" y="86.5" width="132.8" height="94.1"/></clipPath></defs><g clip-path="url(#ic)"><path d="M20 144 L20 139.60 Q21.31 137.57 22.61 139.60 Q24.35 137.75 26.08 139.60 Q27.43 137.51 28.79 139.60 Q29.86 137.66 30.92 139.60 Q32.39 137.12 33.86 139.60 Q34.84 138.06 35.83 139.60 Q36.81 137.09 37.79 139.60 Q39.31 138.56 40.84 139.73 Q42.62 137.21 44.41 140.31 Q45.90 138.40 47.38 140.78 Q48.43 139.96 49.47 141.11 Q50.84 140.26 52.22 141.55 Q53.29 140.30 54.36 141.90 Q55.29 140.20 56.22 142.19 Q56.61 139.68 57.00 142.32 L57 144 Z" fill="#79bd44"/><path d="M108 144 L108 142.20 Q109.33 139.86 110.65 141.96 Q112.15 140.59 113.65 141.69 Q114.56 139.93 115.47 141.53 Q116.62 138.91 117.77 141.32 Q119.29 139.07 120.81 141.05 Q122.21 138.69 123.61 140.79 Q124.65 138.90 125.68 140.61 Q126.72 137.82 127.77 140.42 Q128.72 137.80 129.67 140.25 Q130.64 137.88 131.61 140.08 Q132.81 138.23 134.01 139.86 Q135.67 138.71 137.33 139.56 Q138.29 136.76 139.24 139.39 Q140.60 138.17 141.96 139.30 Q143.75 136.52 145.53 139.30 Q146.53 137.53 147.54 139.30 Q148.56 137.74 149.58 139.30 Q151.04 138.03 152.50 139.30 Q152.65 138.24 152.80 139.30 L152.8 144 Z" fill="#79bd44"/><rect x="20" y="143.2" width="132.8" height="37.4" fill="#a9d95b"/><path d="M20 150.7 Q40 151.2 58 153.8 Q74 155.4 88 151.8 Q98 148.4 108 148.6 Q130 150 152.8 150.4 L152.8 180.6 L20 180.6 Z" fill="#8ec942"/><defs><linearGradient id="gg" x1="0" y1="0" x2="0" y2="1"><stop offset="0" stop-color="#8ec942" stop-opacity="0"/><stop offset="0.5" stop-color="#78bd38"/><stop offset="1" stop-color="#62aa2e"/></linearGradient></defs><rect x="20" y="165" width="132.8" height="15.6" fill="url(#gg)"/><path d="M20.0 180.6 Q21.4 171.5 23.0 164.1 Q22.2 172.4 22.4 180.6Z" fill="#579f2a" opacity="0.85"/><path d="M20.9 180.6 Q22.1 172.6 23.2 166.0 Q23.1 173.3 23.7 180.6Z" fill="#4f9c25" opacity="0.85"/><path d="M22.0 180.6 Q22.6 172.6 23.1 166.0 Q23.3 173.3 23.7 180.6Z" fill="#579f2a" opacity="0.85"/><path d="M23.2 180.6 Q23.0 170.8 22.2 162.8 Q24.0 171.7 25.1 180.6Z" fill="#72b73a" opacity="0.85"/><path d="M24.3 180.6 Q25.0 170.4 25.8 162.0 Q25.6 171.3 25.9 180.6Z" fill="#4f9c25" opacity="0.85"/><path d="M25.3 180.6 Q26.4 169.2 27.7 159.9 Q26.8 170.3 26.7 180.6Z" fill="#4f9c25" opacity="0.85"/><path d="M27.3 180.6 Q28.2 173.7 28.9 168.1 Q29.3 174.4 30.0 180.6Z" fill="#4f9c25" opacity="0.85"/><path d="M28.4 180.6 Q30.0 169.3 32.0 160.0 Q30.4 170.3 30.1 180.6Z" fill="#72b73a" opacity="0.85"/><path d="M29.6 180.6 Q29.3 173.3 28.3 167.3 Q30.1 173.9 31.3 180.6Z" fill="#5ba52b" opacity="0.85"/><path d="M30.9 180.6 Q31.8 170.3 32.6 161.8 Q32.7 171.2 33.2 180.6Z" fill="#66ae31" opacity="0.85"/><path d="M31.9 180.6 Q32.9 173.3 34.0 167.3 Q33.6 174.0 33.7 180.6Z" fill="#4f9c25" opacity="0.85"/><path d="M33.4 180.6 Q35.0 171.0 37.0 163.1 Q35.3 171.9 34.9 180.6Z" fill="#5ba52b" opacity="0.85"/><path d="M35.4 180.6 Q36.1 173.3 36.7 167.3 Q36.9 174.0 37.4 180.6Z" fill="#72b73a" opacity="0.85"/><path d="M36.8 180.6 Q36.1 171.8 34.8 164.7 Q36.9 172.6 38.2 180.6Z" fill="#4f9c25" opacity="0.85"/><path d="M38.4 180.6 Q38.3 169.4 37.7 160.1 Q39.1 170.4 40.0 180.6Z" fill="#72b73a" opacity="0.85"/><path d="M39.7 180.6 Q41.0 173.3 42.5 167.3 Q41.7 174.0 41.9 180.6Z" fill="#5ba52b" opacity="0.85"/><path d="M41.3 180.6 Q41.4 170.5 41.1 162.2 Q42.3 171.4 43.3 180.6Z" fill="#72b73a" opacity="0.85"/><path d="M43.4 180.6 Q44.2 175.0 45.0 170.5 Q44.9 175.6 45.3 180.6Z" fill="#4f9c25" opacity="0.85"/><path d="M44.7 180.6 Q44.9 169.6 44.6 160.5 Q45.9 170.6 46.9 180.6Z" fill="#66ae31" opacity="0.85"/><path d="M46.0 180.6 Q47.2 170.4 48.4 162.0 Q47.9 171.3 48.2 180.6Z" fill="#66ae31" opacity="0.85"/><path d="M48.1 180.6 Q49.7 174.6 51.7 169.7 Q50.0 175.1 49.5 180.6Z" fill="#579f2a" opacity="0.85"/><path d="M50.1 180.6 Q50.4 175.4 50.3 171.2 Q51.5 175.9 52.5 180.6Z" fill="#66ae31" opacity="0.85"/><path d="M51.5 180.6 Q52.9 172.9 54.7 166.5 Q53.3 173.6 53.0 180.6Z" fill="#5ba52b" opacity="0.85"/><path d="M53.4 180.6 Q55.0 173.4 57.1 167.6 Q55.4 174.1 55.1 180.6Z" fill="#579f2a" opacity="0.85"/><path d="M55.4 180.6 Q55.2 171.5 54.3 164.0 Q56.5 172.3 57.9 180.6Z" fill="#72b73a" opacity="0.85"/><path d="M56.8 180.6 Q56.5 175.3 55.6 170.9 Q57.5 175.7 58.7 180.6Z" fill="#579f2a" opacity="0.85"/><path d="M58.7 180.6 Q59.3 169.2 59.6 159.9 Q60.1 170.2 60.7 180.6Z" fill="#66ae31" opacity="0.85"/><path d="M60.2 180.6 Q59.9 173.7 59.0 168.1 Q60.9 174.4 62.1 180.6Z" fill="#72b73a" opacity="0.85"/><path d="M62.0 180.6 Q63.6 172.1 65.5 165.2 Q64.0 172.9 63.7 180.6Z" fill="#66ae31" opacity="0.85"/><path d="M63.2 180.6 Q63.9 172.4 64.5 165.7 Q64.7 173.1 65.3 180.6Z" fill="#579f2a" opacity="0.85"/><path d="M64.5 180.6 Q65.7 170.5 66.9 162.2 Q66.6 171.4 67.0 180.6Z" fill="#5ba52b" opacity="0.85"/><path d="M66.3 180.6 Q66.5 173.3 66.2 167.2 Q67.6 173.9 68.7 180.6Z" fill="#72b73a" opacity="0.85"/><path d="M67.5 180.6 Q69.3 169.2 71.5 159.8 Q70.0 170.2 69.9 180.6Z" fill="#66ae31" opacity="0.85"/><path d="M69.2 180.6 Q69.7 171.8 70.2 164.6 Q70.3 172.6 70.6 180.6Z" fill="#66ae31" opacity="0.85"/><path d="M70.5 180.6 Q71.0 173.8 71.4 168.3 Q71.8 174.5 72.3 180.6Z" fill="#66ae31" opacity="0.85"/><path d="M71.8 180.6 Q73.3 171.4 75.0 163.9 Q74.1 172.2 74.2 180.6Z" fill="#66ae31" opacity="0.85"/><path d="M73.8 180.6 Q74.5 174.5 74.8 169.5 Q75.6 175.1 76.4 180.6Z" fill="#66ae31" opacity="0.85"/><path d="M75.9 180.6 Q75.7 172.2 74.9 165.4 Q76.8 173.0 78.0 180.6Z" fill="#66ae31" opacity="0.85"/><path d="M77.9 180.6 Q79.1 172.5 80.4 165.9 Q79.9 173.2 80.3 180.6Z" fill="#72b73a" opacity="0.85"/><path d="M79.0 180.6 Q80.1 170.5 81.1 162.2 Q80.8 171.4 81.2 180.6Z" fill="#72b73a" opacity="0.85"/><path d="M80.3 180.6 Q80.5 172.0 80.2 165.0 Q81.7 172.8 82.9 180.6Z" fill="#5ba52b" opacity="0.85"/><path d="M81.4 180.6 Q81.3 171.8 80.6 164.6 Q82.4 172.6 83.7 180.6Z" fill="#4f9c25" opacity="0.85"/><path d="M83.0 180.6 Q83.0 175.4 82.4 171.1 Q84.0 175.8 85.1 180.6Z" fill="#5ba52b" opacity="0.85"/><path d="M85.0 180.6 Q85.8 174.9 86.3 170.3 Q86.9 175.4 87.8 180.6Z" fill="#579f2a" opacity="0.85"/><path d="M86.0 180.6 Q86.8 172.6 87.6 166.0 Q87.5 173.3 87.9 180.6Z" fill="#579f2a" opacity="0.85"/><path d="M87.1 180.6 Q87.3 170.9 87.2 163.0 Q88.2 171.8 89.0 180.6Z" fill="#66ae31" opacity="0.85"/><path d="M89.0 180.6 Q89.9 169.9 90.5 161.2 Q90.8 170.9 91.4 180.6Z" fill="#5ba52b" opacity="0.85"/><path d="M90.6 180.6 Q91.2 173.7 91.6 168.0 Q91.9 174.3 92.4 180.6Z" fill="#579f2a" opacity="0.85"/><path d="M91.8 180.6 Q92.1 173.3 92.1 167.4 Q92.8 174.0 93.4 180.6Z" fill="#579f2a" opacity="0.85"/><path d="M93.5 180.6 Q94.2 173.2 94.9 167.2 Q94.8 173.9 95.1 180.6Z" fill="#579f2a" opacity="0.85"/><path d="M95.0 180.6 Q94.5 174.3 93.3 169.2 Q95.4 174.9 96.6 180.6Z" fill="#5ba52b" opacity="0.85"/><path d="M96.3 180.6 Q97.2 173.5 97.9 167.7 Q98.3 174.1 99.0 180.6Z" fill="#66ae31" opacity="0.85"/><path d="M98.0 180.6 Q98.4 169.8 98.6 160.9 Q99.2 170.8 99.9 180.6Z" fill="#4f9c25" opacity="0.85"/><path d="M99.5 180.6 Q99.9 172.5 100.0 165.8 Q101.0 173.2 101.9 180.6Z" fill="#4f9c25" opacity="0.85"/><path d="M101.1 180.6 Q101.9 173.9 102.5 168.5 Q103.0 174.5 103.9 180.6Z" fill="#72b73a" opacity="0.85"/><path d="M102.0 180.6 Q103.6 169.4 105.5 160.3 Q104.1 170.4 103.9 180.6Z" fill="#4f9c25" opacity="0.85"/><path d="M103.5 180.6 Q104.1 174.8 104.3 170.1 Q105.0 175.4 105.8 180.6Z" fill="#66ae31" opacity="0.85"/><path d="M104.5 180.6 Q105.0 174.7 105.3 170.0 Q105.8 175.3 106.4 180.6Z" fill="#579f2a" opacity="0.85"/><path d="M105.7 180.6 Q105.8 169.5 105.4 160.4 Q107.0 170.5 108.2 180.6Z" fill="#66ae31" opacity="0.85"/><path d="M107.6 180.6 Q108.1 170.9 108.4 162.9 Q108.8 171.8 109.4 180.6Z" fill="#72b73a" opacity="0.85"/><path d="M109.1 180.6 Q110.9 170.0 112.8 161.2 Q111.7 170.9 111.7 180.6Z" fill="#5ba52b" opacity="0.85"/><path d="M110.9 180.6 Q111.2 173.7 111.0 168.0 Q112.1 174.3 113.1 180.6Z" fill="#66ae31" opacity="0.85"/><path d="M112.7 180.6 Q113.7 175.5 114.7 171.3 Q114.4 175.9 114.6 180.6Z" fill="#579f2a" opacity="0.85"/><path d="M113.8 180.6 Q114.9 175.6 116.0 171.6 Q115.6 176.1 115.9 180.6Z" fill="#5ba52b" opacity="0.85"/><path d="M115.7 180.6 Q116.8 172.0 118.1 165.1 Q117.2 172.8 117.2 180.6Z" fill="#72b73a" opacity="0.85"/><path d="M117.3 180.6 Q118.5 171.1 119.6 163.3 Q119.5 172.0 120.1 180.6Z" fill="#72b73a" opacity="0.85"/><path d="M118.8 180.6 Q120.5 171.1 122.4 163.4 Q121.2 172.0 121.2 180.6Z" fill="#72b73a" opacity="0.85"/><path d="M120.7 180.6 Q122.0 175.2 123.2 170.8 Q122.9 175.7 123.3 180.6Z" fill="#72b73a" opacity="0.85"/><path d="M122.3 180.6 Q122.5 171.4 122.2 163.8 Q123.4 172.2 124.4 180.6Z" fill="#4f9c25" opacity="0.85"/><path d="M123.8 180.6 Q124.0 172.0 123.8 165.0 Q124.9 172.8 125.9 180.6Z" fill="#4f9c25" opacity="0.85"/><path d="M125.2 180.6 Q126.2 172.1 127.3 165.1 Q126.6 172.9 126.7 180.6Z" fill="#66ae31" opacity="0.85"/><path d="M127.1 180.6 Q126.6 170.4 125.4 162.1 Q127.9 171.3 129.4 180.6Z" fill="#72b73a" opacity="0.85"/><path d="M129.2 180.6 Q128.8 169.1 127.6 159.6 Q130.0 170.1 131.5 180.6Z" fill="#5ba52b" opacity="0.85"/><path d="M130.3 180.6 Q131.6 171.4 133.0 163.9 Q132.6 172.2 133.0 180.6Z" fill="#4f9c25" opacity="0.85"/><path d="M132.4 180.6 Q132.3 171.0 131.5 163.1 Q133.2 171.9 134.4 180.6Z" fill="#4f9c25" opacity="0.85"/><path d="M133.8 180.6 Q133.4 174.6 132.2 169.7 Q134.6 175.1 136.1 180.6Z" fill="#5ba52b" opacity="0.85"/><path d="M135.5 180.6 Q136.2 170.7 136.8 162.7 Q136.9 171.6 137.3 180.6Z" fill="#5ba52b" opacity="0.85"/><path d="M137.3 180.6 Q137.6 169.9 137.7 161.1 Q138.3 170.8 138.9 180.6Z" fill="#66ae31" opacity="0.85"/><path d="M139.0 180.6 Q140.0 172.4 140.9 165.7 Q140.6 173.2 140.9 180.6Z" fill="#5ba52b" opacity="0.85"/><path d="M140.1 180.6 Q141.2 173.7 142.2 168.1 Q141.9 174.3 142.3 180.6Z" fill="#66ae31" opacity="0.85"/><path d="M142.1 180.6 Q142.2 172.0 141.8 164.9 Q143.2 172.8 144.3 180.6Z" fill="#579f2a" opacity="0.85"/><path d="M143.3 180.6 Q144.9 170.2 147.0 161.6 Q145.4 171.1 145.0 180.6Z" fill="#4f9c25" opacity="0.85"/><path d="M145.2 180.6 Q144.9 172.7 143.9 166.2 Q145.9 173.4 147.1 180.6Z" fill="#5ba52b" opacity="0.85"/><path d="M146.9 180.6 Q146.6 175.1 145.6 170.6 Q147.8 175.6 149.2 180.6Z" fill="#5ba52b" opacity="0.85"/><path d="M148.4 180.6 Q148.9 172.7 149.1 166.2 Q149.7 173.4 150.3 180.6Z" fill="#66ae31" opacity="0.85"/><path d="M149.4 180.6 Q149.8 172.1 149.8 165.2 Q150.7 172.9 151.6 180.6Z" fill="#4f9c25" opacity="0.85"/><path d="M151.4 180.6 Q152.8 172.8 154.2 166.4 Q153.7 173.5 154.0 180.6Z" fill="#5ba52b" opacity="0.85"/><path d="M64.5 117.5 L57.2 130.9 Q59.5 133 60.4 138.2 Q61.5 141 63.5 140.8 L77.2 138.2 L86 133 L88 129.5 L73 118.3 Z" fill="#fff"/><path d="M71 106.1 L78.3 97.3 M81.8 100.7 L73 118.3" stroke="#222" stroke-width="0.62" fill="none" stroke-linecap="round" stroke-linejoin="round"/><path d="M78.3 96.6 Q80.5 95 83.2 95.6 Q83.8 97.6 82 99.3 Q79.5 99.6 78.3 96.6Z" fill="#fff" stroke="#222" stroke-width="0.62" fill="none" stroke-linecap="round" stroke-linejoin="round"/><path d="M80.6 95.6 Q82.8 95.3 83.2 95.9 Q82.8 97.6 81.5 98Z" fill="#444"/><path d="M63.5 111.5 Q63.8 106.2 68.5 105.8 Q73 106 73.6 110.5 Q73.8 114.5 70 116.6 Q66.5 117.5 64.5 115" fill="#fff" stroke="#222" stroke-width="0.62" fill="none" stroke-linecap="round" stroke-linejoin="round"/><path d="M59.3 113 Q61.5 111.2 64.8 112.6 Q63.3 114.5 59.8 114.6 Z" fill="#fff" stroke="#222" stroke-width="0.62" fill="none" stroke-linecap="round" stroke-linejoin="round"/><path d="M65.8 109 Q68.5 108.3 70.2 111.5 Q69.8 114 67.5 114.5 M68.8 106.8 Q72 109 71.8 113" stroke="#222" stroke-width="0.62" fill="none" stroke-linecap="round" stroke-linejoin="round"/><path d="M64.5 117.8 L57.2 130.9 M63 116.2 L85.5 129.3 M57.2 130.9 L83.4 133" stroke="#222" stroke-width="0.62" fill="none" stroke-linecap="round" stroke-linejoin="round"/><path d="M57.2 130.9 Q59.6 133.5 60.2 137.5 Q61 140.6 63.5 140.8 L77.2 138.2" stroke="#222" stroke-width="0.62" fill="none" stroke-linecap="round" stroke-linejoin="round"/><path d="M61.5 130 Q65 127 68.6 126 Q71.5 127.5 71.8 132.3" stroke="#222" stroke-width="0.62" fill="none" stroke-linecap="round" stroke-linejoin="round"/><path d="M119.1 112.8 L109.9 139.2 L104.3 134 L64.6 161.7 L53.4 148 L94.7 124.5 L89.4 115.3 Z" fill="#4cbf85"/><path d="M85 129.6 L88.6 128.6 L89.6 132.6 L86 134Z" fill="#3a8a5a" stroke="#222" stroke-width="0.62" fill="none" stroke-linecap="round" stroke-linejoin="round"/><path d="M76.1 137.7 Q77.2 145 78.2 152.4 M83.4 133 Q85 142 85.5 150.8 M76.1 137.7 Q78 135.5 80 136.2" stroke="#222" stroke-width="0.62" fill="none" stroke-linecap="round" stroke-linejoin="round"/><path d="M63.5 140.8 L77.2 138.2" stroke="#222" stroke-width="0.62" fill="none" stroke-linecap="round" stroke-linejoin="round"/><path d="M80.3 151.4 Q85 150.4 91.3 149.6 Q92.6 150 91.6 151.3 Q87 152.8 81.5 153 Q79.8 152.6 80.3 151.4Z" fill="#1b1b1b"/><circle cx="104.1" cy="97.4" r="6.7" stroke="#222" fill="none" stroke-width="0.7"/><path d="M111.4 98.2 Q111 104.6 104.6 105" stroke="#222" fill="none" stroke-width="0.7"/><circle cx="92.6" cy="112" r="7.2" stroke="#222" fill="none" stroke-width="0.7"/><path d="M100.4 113 Q100 119.8 93 120.2" stroke="#222" fill="none" stroke-width="0.7"/><g transform="translate(104.1 97.4) scale(0.95)"><path d="M2 -2.2 Q1.6 -3.3 0 -3.3 Q-2.2 -3.3 -2.2 -1.7 Q-2.2 -0.4 0 0 Q2.3 0.4 2.3 1.8 Q2.3 3.4 0 3.4 Q-1.7 3.4 -2.2 2.1 M0 -4.6 V4.6" fill="none" stroke="#1f1f1f" stroke-width="0.75"/></g><g transform="translate(92.6 112) scale(1.0)"><path d="M2 -2.2 Q1.6 -3.3 0 -3.3 Q-2.2 -3.3 -2.2 -1.7 Q-2.2 -0.4 0 0 Q2.3 0.4 2.3 1.8 Q2.3 3.4 0 3.4 Q-1.7 3.4 -2.2 2.1 M0 -4.6 V4.6" fill="none" stroke="#1f1f1f" stroke-width="0.75"/></g></g></svg>
<svg style="position:absolute;left:0;top:0" width="800" height="410" viewBox="0 0 800 410"><text x="201.7" y="146" font-size="5.9" fill="#666" stroke="#666" stroke-width="0.12" text-anchor="middle" font-weight="bold" font-family="Liberation Sans">Total In-Out (Rp)</text><path d="M201.5 181.1 L201.50 150.30 A30.8 30.8 0 1 1 180.14 203.29 Z" fill="#4ae28c" stroke="#fff" stroke-width="0.5"/><path d="M201.5 181.1 L180.14 203.29 A30.8 30.8 0 0 1 201.50 150.30 Z" fill="#e06666" stroke="#fff" stroke-width="0.5"/><text x="184" y="176.4" font-size="5.9" fill="#222" stroke="#222" stroke-width="0.12" text-anchor="middle" font-weight="normal" font-family="Liberation Sans">37,8%</text><text x="218.6" y="189.5" font-size="5.9" fill="#222" stroke="#222" stroke-width="0.12" text-anchor="middle" font-weight="normal" font-family="Liberation Sans">62,2%</text><circle cx="164.9" cy="217.3" r="2.2" fill="#4ae28c"/><circle cx="206.5" cy="217.3" r="2.2" fill="#e06666"/><text x="170.8" y="219.4" font-size="5.1" fill="#222" stroke="#222" stroke-width="0.12" text-anchor="start" font-weight="normal" font-family="Liberation Sans">Pemasukan</text><text x="212.4" y="219.4" font-size="5.1" fill="#222" stroke="#222" stroke-width="0.12" text-anchor="start" font-weight="normal" font-family="Liberation Sans">Pengeluaran</text><text x="304.3" y="146" font-size="6.2" fill="#444" stroke="#444" stroke-width="0.12" text-anchor="middle" font-weight="normal" font-family="Liberation Sans">Total Status Transaksi</text><path d="M304.3 181.1 L304.30 150.30 A30.8 30.8 0 0 1 321.13 206.90 Z" fill="#4ae28c" stroke="#fff" stroke-width="0.5"/><path d="M304.3 181.1 L321.13 206.90 A30.8 30.8 0 1 1 304.30 150.30 Z" fill="#e06666" stroke="#fff" stroke-width="0.5"/><text x="321.9" y="177.5" font-size="5.9" fill="#222" stroke="#222" stroke-width="0.12" text-anchor="middle" font-weight="normal" font-family="Liberation Sans">40,8%</text><text x="286.8" y="188.4" font-size="5.9" fill="#222" stroke="#222" stroke-width="0.12" text-anchor="middle" font-weight="normal" font-family="Liberation Sans">59,2%</text><circle cx="280.2" cy="217.3" r="2.2" fill="#4ae28c"/><circle cx="309.4" cy="217.3" r="2.2" fill="#e06666"/><text x="285.3" y="219.4" font-size="5.1" fill="#222" stroke="#222" stroke-width="0.12" text-anchor="start" font-weight="normal" font-family="Liberation Sans">Lunas</text><text x="315" y="219.4" font-size="5.1" fill="#222" stroke="#222" stroke-width="0.12" text-anchor="start" font-weight="normal" font-family="Liberation Sans">Hutang</text><text x="414.6" y="146" font-size="5.8" fill="#6f6f6f" stroke="#6f6f6f" stroke-width="0.12" text-anchor="middle" font-weight="bold" font-family="Liberation Sans">Status Pengiriman</text><path d="M414.4 181.1 L414.40 150.30 A30.8 30.8 0 0 1 443.69 171.58 Z" fill="#4ae28c" stroke="#fff" stroke-width="0.5"/><path d="M414.4 181.1 L443.69 171.58 A30.8 30.8 0 1 1 414.40 150.30 Z" fill="#fbbc04" stroke="#fff" stroke-width="0.5"/><text x="428.4" y="164" font-size="5.9" fill="#222" stroke="#222" stroke-width="0.12" text-anchor="middle" font-weight="normal" font-family="Liberation Sans">1</text><text x="400.6" y="201.8" font-size="5.9" fill="#222" stroke="#222" stroke-width="0.12" text-anchor="middle" font-weight="normal" font-family="Liberation Sans">4</text><circle cx="380.8" cy="217.3" r="2.2" fill="#4ae28c"/><circle cx="414.8" cy="217.3" r="2.2" fill="#fbbc04"/><text x="386.3" y="219.4" font-size="5.1" fill="#222" stroke="#222" stroke-width="0.12" text-anchor="start" font-weight="normal" font-family="Liberation Sans">Diterima</text><text x="420" y="219.4" font-size="5.1" fill="#222" stroke="#222" stroke-width="0.12" text-anchor="start" font-weight="normal" font-family="Liberation Sans">Dalam proses</text><text x="317.3" y="239" font-size="6.1" fill="#444" stroke="#444" stroke-width="0.12" text-anchor="middle" font-weight="normal" font-family="Liberation Sans">Total Transaksi</text><line x1="193" y1="349.70" x2="463.6" y2="349.70" stroke="#9e9e9e" stroke-width="0.9"/><text x="190.6" y="351.8" font-size="4.95" fill="#333" stroke="#333" stroke-width="0.12" text-anchor="end" font-weight="normal" font-family="Liberation Sans">Rp0</text><line x1="193" y1="329.37" x2="463.6" y2="329.37" stroke="#e0e0e0" stroke-width="0.5"/><text x="190.6" y="331.47" font-size="4.95" fill="#333" stroke="#333" stroke-width="0.12" text-anchor="end" font-weight="normal" font-family="Liberation Sans">Rp1.000.000</text><line x1="193" y1="309.04" x2="463.6" y2="309.04" stroke="#e0e0e0" stroke-width="0.5"/><text x="190.6" y="311.14" font-size="4.95" fill="#333" stroke="#333" stroke-width="0.12" text-anchor="end" font-weight="normal" font-family="Liberation Sans">Rp2.000.000</text><line x1="193" y1="288.71" x2="463.6" y2="288.71" stroke="#e0e0e0" stroke-width="0.5"/><text x="190.6" y="290.81" font-size="4.95" fill="#333" stroke="#333" stroke-width="0.12" text-anchor="end" font-weight="normal" font-family="Liberation Sans">Rp3.000.000</text><line x1="193" y1="268.38" x2="463.6" y2="268.38" stroke="#e0e0e0" stroke-width="0.5"/><text x="190.6" y="270.48" font-size="4.95" fill="#333" stroke="#333" stroke-width="0.12" text-anchor="end" font-weight="normal" font-family="Liberation Sans">Rp4.000.000</text><line x1="193" y1="248.05" x2="463.6" y2="248.05" stroke="#e0e0e0" stroke-width="0.5"/><text x="190.6" y="250.15" font-size="4.95" fill="#333" stroke="#333" stroke-width="0.12" text-anchor="end" font-weight="normal" font-family="Liberation Sans">Rp5.000.000</text><rect x="210.80" y="265.33" width="33" height="84.37" fill="#4285f4"/><text x="227.3" y="271.4305" font-size="4.9" fill="#fff" stroke="#fff" stroke-width="0.12" text-anchor="middle" font-weight="normal" font-family="Liberation Sans">Rp4.150.000</text><text x="227.3" y="357.2" font-size="4.95" fill="#222" stroke="#222" stroke-width="0.12" text-anchor="middle" font-weight="normal" font-family="Liberation Sans">Jual (In)</text><rect x="261.00" y="301.92" width="33" height="47.78" fill="#ea4335"/><text x="277.5" y="308.0245" font-size="4.9" fill="#fff" stroke="#fff" stroke-width="0.12" text-anchor="middle" font-weight="normal" font-family="Liberation Sans">Rp2.350.000</text><text x="277.5" y="357.2" font-size="4.95" fill="#222" stroke="#222" stroke-width="0.12" text-anchor="middle" font-weight="normal" font-family="Liberation Sans">Produksi (Out)</text><rect x="311.80" y="349.23" width="33" height="0.60" fill="#ea4335"/><text x="328.3" y="343.73241" font-size="4.9" fill="#d4463a" stroke="#d4463a" stroke-width="0.12" text-anchor="middle" font-weight="normal" font-family="Liberation Sans">Rp23.000</text><text x="328.3" y="357.2" font-size="4.95" fill="#222" stroke="#222" stroke-width="0.12" text-anchor="middle" font-weight="normal" font-family="Liberation Sans">Gaji (Out)</text><rect x="362.50" y="348.88" width="33" height="0.82" fill="#ea4335"/><text x="379" y="343.37663499999996" font-size="4.9" fill="#d4463a" stroke="#d4463a" stroke-width="0.12" text-anchor="middle" font-weight="normal" font-family="Liberation Sans">Rp40.500</text><text x="379" y="357.2" font-size="4.95" fill="#222" stroke="#222" stroke-width="0.12" text-anchor="middle" font-weight="normal" font-family="Liberation Sans">Lain-Lain (Out)</text><rect x="413.10" y="347.44" width="33" height="2.26" fill="#ea4335"/><text x="429.6" y="341.94337" font-size="4.9" fill="#d4463a" stroke="#d4463a" stroke-width="0.12" text-anchor="middle" font-weight="normal" font-family="Liberation Sans">Rp111.000</text><text x="429.6" y="357.2" font-size="4.95" fill="#222" stroke="#222" stroke-width="0.12" text-anchor="middle" font-weight="normal" font-family="Liberation Sans">Operasional (Out)</text><text x="317.3" y="381.6" font-size="6.1" fill="#444" stroke="#444" stroke-width="0.12" text-anchor="middle" font-weight="normal" font-family="Liberation Sans">Total Transaksi by Day</text><text x="190.6" y="393.2" font-size="5.3" fill="#333" stroke="#333" stroke-width="0.12" text-anchor="end" font-weight="normal" font-family="Liberation Sans">Rp2.500.000</text><text x="342.5" y="393.2" font-size="5.3" fill="#4285f4" stroke="#4285f4" stroke-width="0.12" text-anchor="middle" font-weight="normal" font-family="Liberation Sans">Rp2.311.000</text></svg>
<div style="position:absolute;left:19.00px;top:391.60px;width:777.00px;height:5.90px;background:#fff;"></div>
<div style="position:absolute;left:19.00px;top:391.80px;width:777.00px;height:0.50px;background:#e8eaed;"></div>
<div style="position:absolute;left:20.50px;top:392.00px;width:330.50px;height:3.70px;background:#d2d4d6;border-radius:1.8px;"></div>
<div style="position:absolute;left:784px;top:393px;font-size:3.5px;color:#888">&#9664;</div>
<div style="position:absolute;left:791px;top:393px;font-size:3.5px;color:#888">&#9654;</div>
<div style="position:absolute;left:695.10px;top:388.60px;width:45.90px;height:3.00px;border:0.9px solid #1a73e8;border-bottom:none;box-sizing:border-box;border-radius:0.5px 0.5px 0 0;"></div>
<div style="position:absolute;left:796.00px;top:58.30px;width:4.00px;height:333.30px;background:#fff;"></div>
<div style="position:absolute;left:796.00px;top:58.30px;width:0.40px;height:339.20px;background:#e8eaed;"></div>
<div style="position:absolute;left:797.20px;top:69.60px;width:2.80px;height:10.80px;background:#dadce0;border-radius:1.4px;"></div>
<div style="position:absolute;left:797px;top:377.5px;font-size:3.2px;color:#888">&#9650;</div>
<div style="position:absolute;left:797px;top:385px;font-size:3.2px;color:#888">&#9660;</div>
<div style="position:absolute;left:0.00px;top:397.50px;width:800.00px;height:12.50px;background:#f9fbfd;"></div>
<div style="position:absolute;left:0.00px;top:397.30px;width:800.00px;height:0.50px;background:#e1e3e1;"></div>
<svg style="position:absolute;left:23.6px;top:403px" width="4.6" height="4.6" viewBox="0 0 10 10"><path d="M5 0v10M0 5h10" stroke="#444" stroke-width="1.3"/></svg>
<svg style="position:absolute;left:39.5px;top:402.8px" width="6" height="5" viewBox="0 0 12 10"><path d="M0 1h12M0 5h12M0 9h12" stroke="#666" stroke-width="1.4"/></svg>
<div style="position:absolute;left:56.00px;top:397.80px;width:50.00px;height:12.20px;background:#e1e9f7;"></div>
<div style="position:absolute;left:61px;top:402.7px;font-size:6.6px;color:#0b57d0;white-space:nowrap;-webkit-text-stroke:0.22px #0b57d0">Dashboard</div>
<svg style="position:absolute;left:98.2px;top:404.6px" width="2.6" height="1.6" viewBox="0 0 8 5"><path d="M0 0h8L4 5z" fill="#0b57d0"/></svg>
<div style="position:absolute;left:111px;top:402.8px;font-size:6.5px;color:#3c3c3c;white-space:nowrap">In Out Keuangan</div>
<svg style="position:absolute;left:164.3px;top:404.6px" width="2.6" height="1.6" viewBox="0 0 8 5"><path d="M0 0h8L4 5z" fill="#444"/></svg>
<div style="position:absolute;left:177.5px;top:402.8px;font-size:6.5px;color:#3c3c3c;white-space:nowrap">Inventory</div>
<svg style="position:absolute;left:207.6px;top:404.6px" width="2.6" height="1.6" viewBox="0 0 8 5"><path d="M0 0h8L4 5z" fill="#444"/></svg>
<div style="position:absolute;left:223.8px;top:402.8px;font-size:6.5px;color:#3c3c3c;white-space:nowrap">Vendor</div>
<svg style="position:absolute;left:249.6px;top:404.6px" width="2.6" height="1.6" viewBox="0 0 8 5"><path d="M0 0h8L4 5z" fill="#444"/></svg>
<div style="position:absolute;left:262.5px;top:402.8px;font-size:6.5px;color:#3c3c3c;white-space:nowrap">Aset</div>
<svg style="position:absolute;left:281.8px;top:404.6px" width="2.6" height="1.6" viewBox="0 0 8 5"><path d="M0 0h8L4 5z" fill="#444"/></svg>
<svg style="position:absolute;left:295px;top:401.6px" width="5" height="6.5" viewBox="0 0 10 13"><path d="M2.5 6V4a2.5 2.5 0 0 1 5 0v2" fill="none" stroke="#444" stroke-width="1.6"/><rect x="1" y="6" width="8" height="7" rx="1" fill="#444"/></svg>
<div style="position:absolute;left:302.5px;top:402.8px;font-size:6.5px;color:#3c3c3c;white-space:nowrap">DB</div>
<svg style="position:absolute;left:316.5px;top:404.6px" width="2.6" height="1.6" viewBox="0 0 8 5"><path d="M0 0h8L4 5z" fill="#444"/></svg>
<svg style="position:absolute;left:787.5px;top:403.5px" width="3" height="4.5" viewBox="0 0 6 9"><path d="M5 1L1.5 4.5 5 8" fill="none" stroke="#444" stroke-width="1.3"/></svg>
</body></html>
